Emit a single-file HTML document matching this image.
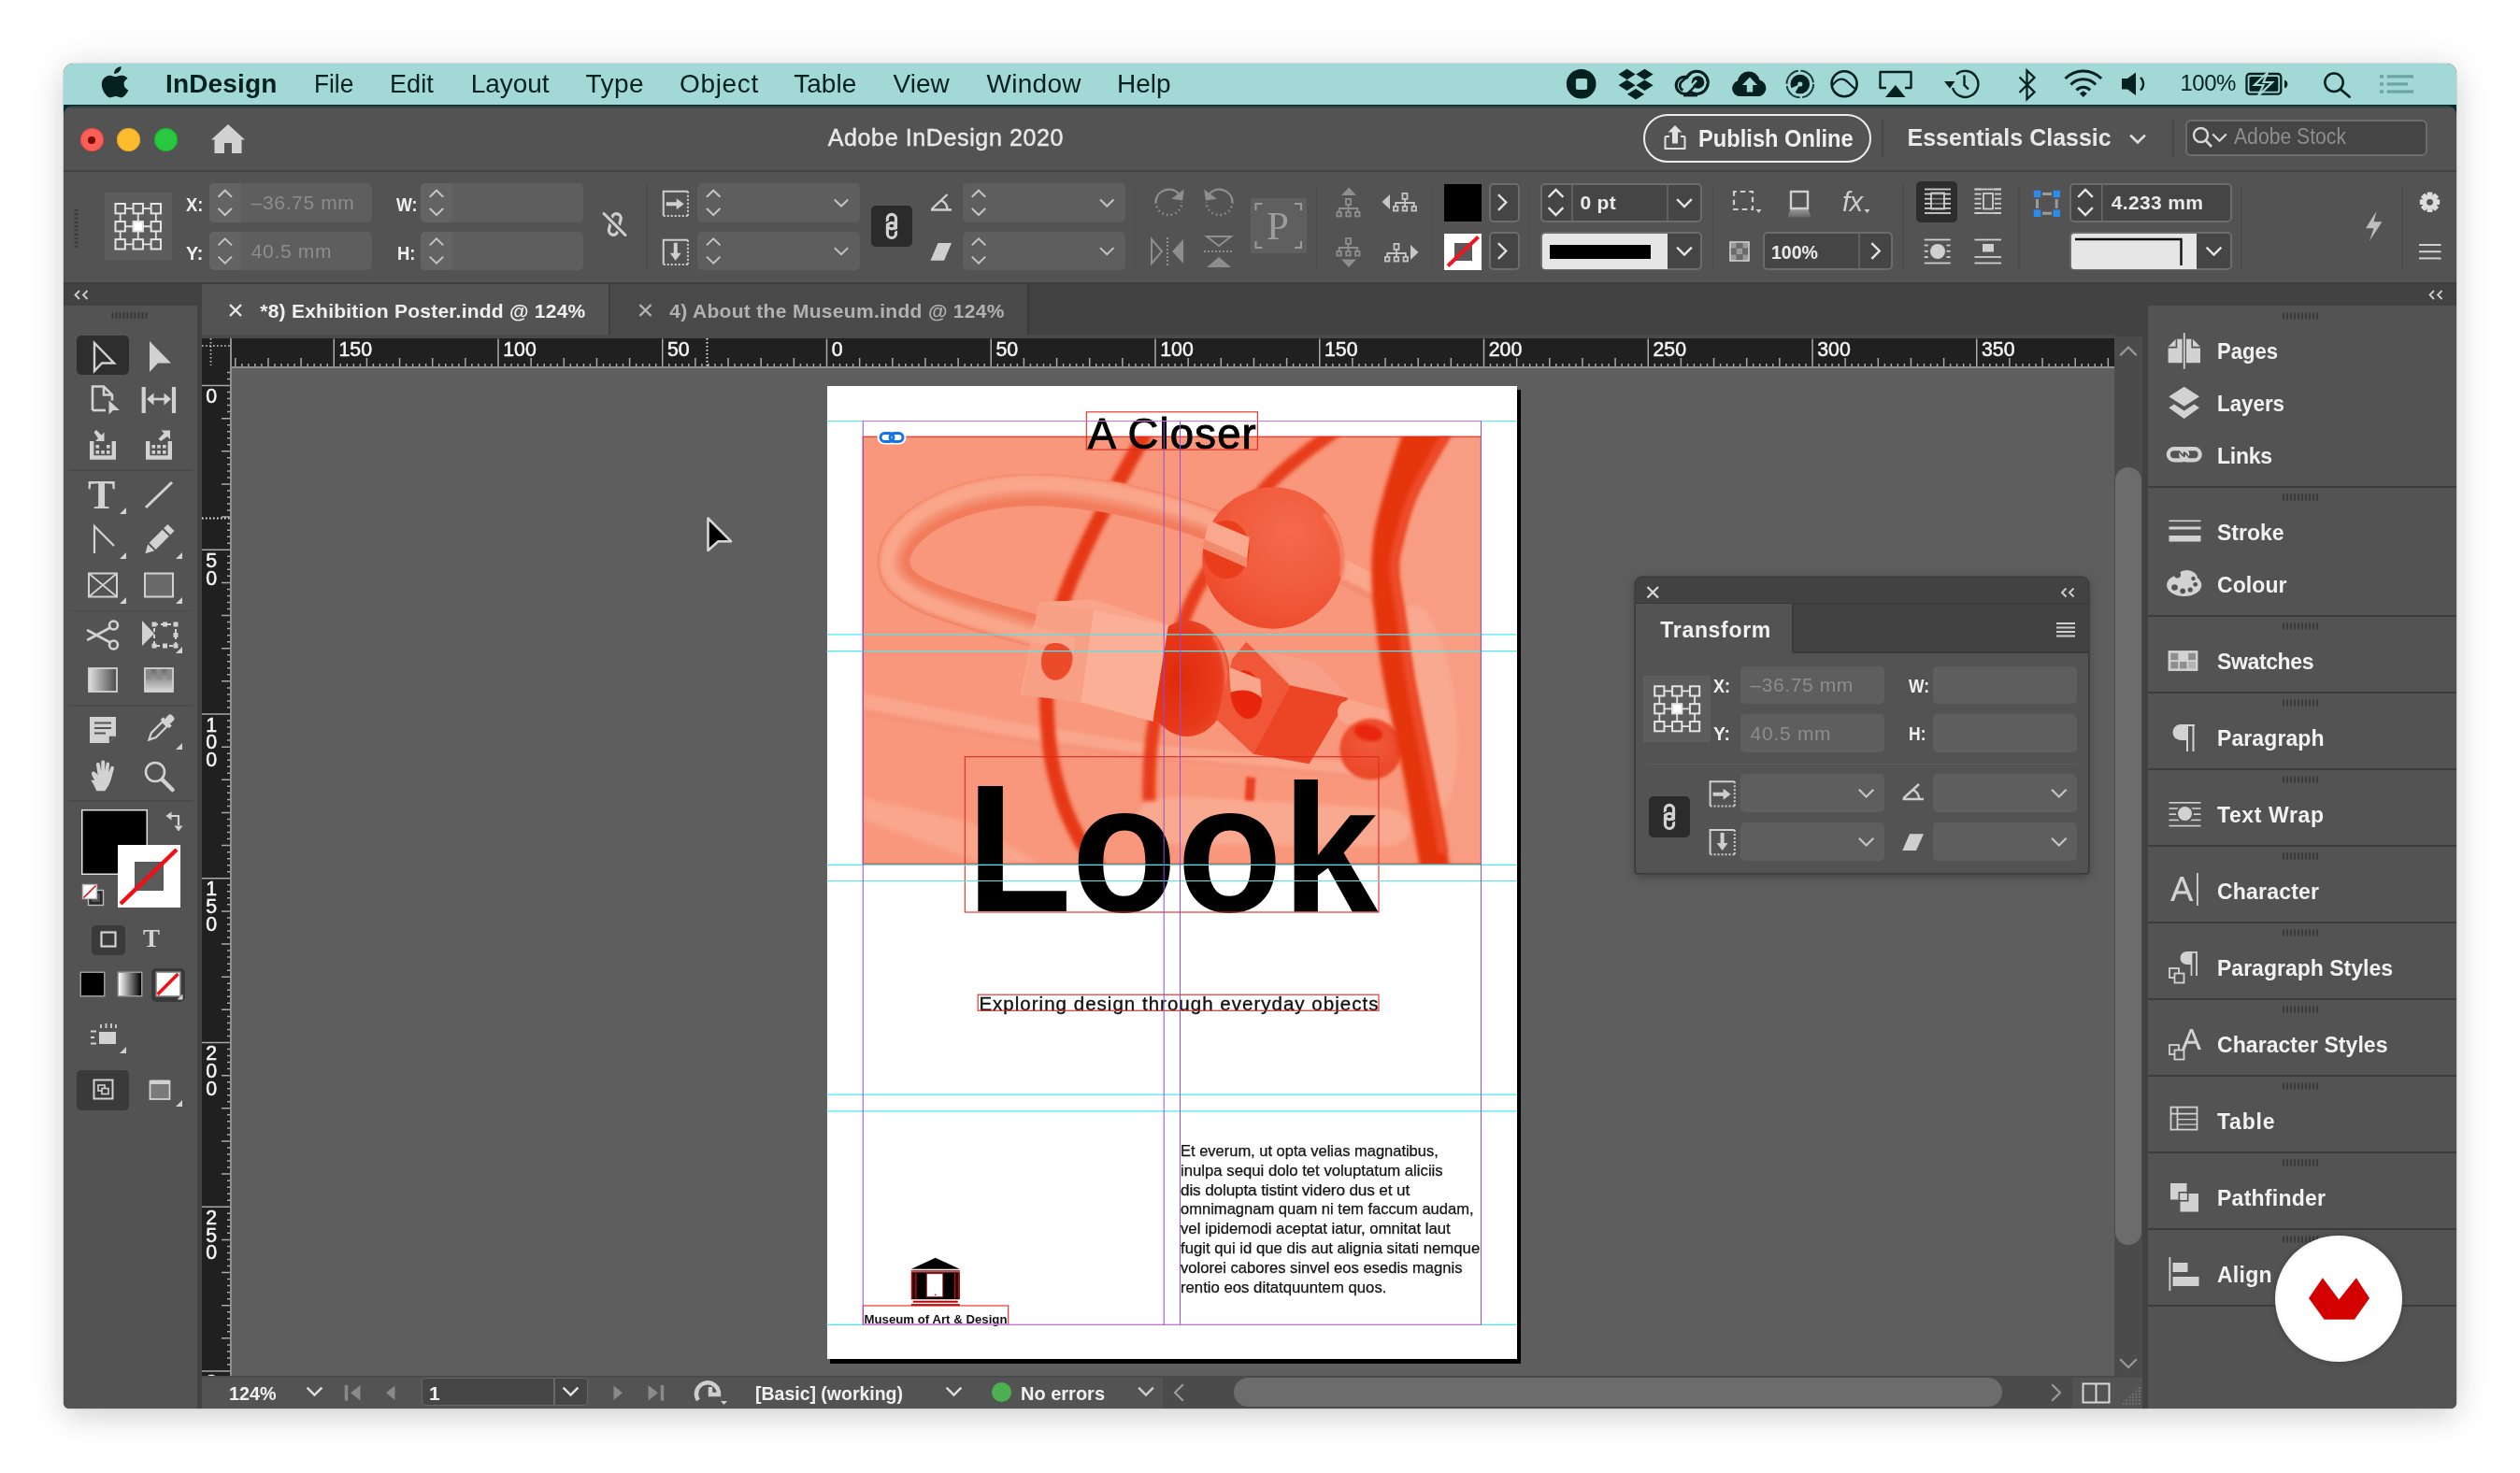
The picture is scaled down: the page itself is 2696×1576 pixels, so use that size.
<!DOCTYPE html>
<html lang="en"><head><meta charset="utf-8"><title>Adobe InDesign 2020</title>
<style>
html,body{margin:0;padding:0;}
body{width:2696px;height:1576px;background:#fff;overflow:hidden;position:relative;font-family:'Liberation Sans',sans-serif;}
#shadow{position:absolute;left:68px;top:68px;width:2560px;height:1439px;border-radius:10px 10px 6px 6px;box-shadow:0 12px 30px rgba(0,0,0,.10),0 0 44px rgba(0,0,0,.10),0 0 1.5px rgba(0,0,0,.4);}
#win{position:absolute;left:68px;top:68px;width:2560px;height:1439px;overflow:hidden;border-radius:10px 10px 6px 6px;background:#535353;}
#in{position:absolute;left:-68px;top:-68px;width:2696px;height:1576px;}
#in div,#in svg,#in span.t{position:absolute;}
span.t{white-space:pre;}
#win{will-change:transform;}
svg{overflow:visible;}

</style></head>
<body>
<div id="shadow"></div>
<div id="win"><div id="in">
<div style="left:68px;top:68px;width:2560px;height:44px;background:#a2d9d7;"></div>
<div style="left:68px;top:111.7px;width:2560px;height:13px;background:#03302f;"></div>
<div style="left:68px;top:113.4px;width:2560px;height:80px;border-radius:10px 10px 0 0;background:linear-gradient(#253838,#535353 3.5px);"></div>
<svg style="left:105.9px;top:69.7px;" width="34.6" height="36.8" viewBox="0 0 29.2 29"><g transform="scale(1.13,1)"><path fill="#04201f" d="M17.6 0c.2 1.7-.5 3.3-1.5 4.5-1 1.200-2.600 2.100-4.100 2-.2-1.600.6-3.300 1.500-4.300C14.500 1 16.200.1 17.600 0zM22.800 10.800c-.2.100-2.900 1.700-2.900 5 0 3.900 3.400 5.200 3.500 5.300 0 .1-.5 1.900-1.800 3.700-1.100 1.600-2.200 3.200-4 3.200s-2.300-1.100-4.300-1.100c-2 0-2.700 1.100-4.300 1.100-1.700.1-3-1.700-4.100-3.300C2.600 21.400.8 15.500 3.200 11.400c1.200-2 3.300-3.300 5.500-3.400 1.700 0 3.300 1.200 4.300 1.200 1 0 3-1.400 5.100-1.200.9 0 3.300.4 4.700 2.800z"/></g></svg>
<span class="t" style="left:177.00px;top:76.30px;font-size:28px;line-height:28px;color:#04201f;font-weight:700;letter-spacing:0.145px;">InDesign</span>
<span class="t" style="left:335.75px;top:76.30px;font-size:28px;line-height:28px;color:#04201f;transform:scaleX(0.9363);transform-origin:0 0;">File</span>
<span class="t" style="left:417.00px;top:76.30px;font-size:28px;line-height:28px;color:#04201f;transform:scaleX(0.9689);transform-origin:0 0;">Edit</span>
<span class="t" style="left:503.75px;top:76.30px;font-size:28px;line-height:28px;color:#04201f;letter-spacing:-0.066px;">Layout</span>
<span class="t" style="left:626.50px;top:76.30px;font-size:28px;line-height:28px;color:#04201f;letter-spacing:0.432px;">Type</span>
<span class="t" style="left:727.00px;top:76.30px;font-size:28px;line-height:28px;color:#04201f;letter-spacing:0.662px;">Object</span>
<span class="t" style="left:849.25px;top:76.30px;font-size:28px;line-height:28px;color:#04201f;letter-spacing:0.016px;">Table</span>
<span class="t" style="left:955.50px;top:76.30px;font-size:28px;line-height:28px;color:#04201f;letter-spacing:0.021px;">View</span>
<span class="t" style="left:1055.50px;top:76.30px;font-size:28px;line-height:28px;color:#04201f;letter-spacing:0.281px;">Window</span>
<span class="t" style="left:1195.00px;top:76.30px;font-size:28px;line-height:28px;color:#04201f;letter-spacing:-0.031px;">Help</span>
<div style="left:85.5px;top:137px;width:25px;height:25px;background:#fc5f57;border-radius:50%;box-shadow:inset 0 0 0 1px #e0443e;"></div>
<div style="left:125.25px;top:137px;width:25px;height:25px;background:#fdbc2e;border-radius:50%;box-shadow:inset 0 0 0 1px #dea123;"></div>
<div style="left:165.25px;top:137px;width:25px;height:25px;background:#28c840;border-radius:50%;box-shadow:inset 0 0 0 1px #1aab29;"></div>
<div style="left:94px;top:145.5px;width:8px;height:8px;background:#7a0a05;border-radius:50%;"></div>
<svg style="left:226px;top:133px;" width="36" height="31" viewBox="0 0 36 31"><path fill="#d2d2d2" d="M18 0 36 16.500 32.500 16.500 32.500 31 22 31 22 20 14 20 14 31 3.500 31 3.500 16.500 0 16.500z"/></svg>
<span class="t" style="left:885.75px;top:134.59px;font-size:25px;line-height:25px;color:#e8e8e8;letter-spacing:0.627px;-webkit-text-stroke:0.45px #e8e8e8;">Adobe InDesign 2020</span>
<div style="left:68px;top:182px;width:2560px;height:2px;background:#424242;"></div>
<div style="left:68px;top:184px;width:2560px;height:118px;background:#535353;"></div>
<div style="left:68px;top:302px;width:2560px;height:2px;background:#3e3e3e;"></div>
<svg style="left:0;top:0" width="2696" height="1576" viewBox="0 0 2696 1576"><rect x="79.5" y="224.0" width="4" height="2" fill="#3a3a3a"/><rect x="79.5" y="228.3" width="4" height="2" fill="#3a3a3a"/><rect x="79.5" y="232.6" width="4" height="2" fill="#3a3a3a"/><rect x="79.5" y="236.9" width="4" height="2" fill="#3a3a3a"/><rect x="79.5" y="241.2" width="4" height="2" fill="#3a3a3a"/><rect x="79.5" y="245.5" width="4" height="2" fill="#3a3a3a"/><rect x="79.5" y="249.8" width="4" height="2" fill="#3a3a3a"/><rect x="79.5" y="254.1" width="4" height="2" fill="#3a3a3a"/><rect x="79.5" y="258.4" width="4" height="2" fill="#3a3a3a"/><rect x="79.5" y="262.7" width="4" height="2" fill="#3a3a3a"/></svg>
<div style="left:112px;top:206px;width:72px;height:72px;background:#5d5d5d;"></div>
<svg style="left:0;top:0" width="2696" height="1576" viewBox="0 0 2696 1576"><line x1="128.68625" y1="223.18625" x2="166.81375" y2="223.18625" stroke="#e4e4e4" stroke-width="1.8"/><line x1="128.68625" y1="223.18625" x2="128.68625" y2="261.31375" stroke="#e4e4e4" stroke-width="1.8"/><line x1="128.68625" y1="261.31375" x2="166.81375" y2="261.31375" stroke="#e4e4e4" stroke-width="1.8"/><line x1="166.81375" y1="223.18625" x2="166.81375" y2="261.31375" stroke="#e4e4e4" stroke-width="1.8"/><line x1="128.68625" y1="242.25" x2="166.81375" y2="242.25" stroke="#e4e4e4" stroke-width="1.8"/><line x1="147.75" y1="223.18625" x2="147.75" y2="261.31375" stroke="#e4e4e4" stroke-width="1.8"/><rect x="123.50" y="218.00" width="10.37" height="10.37" fill="#5d5d5d" stroke="#e4e4e4" stroke-width="2"/><rect x="142.56" y="218.00" width="10.37" height="10.37" fill="#5d5d5d" stroke="#e4e4e4" stroke-width="2"/><rect x="161.63" y="218.00" width="10.37" height="10.37" fill="#5d5d5d" stroke="#e4e4e4" stroke-width="2"/><rect x="123.50" y="237.06" width="10.37" height="10.37" fill="#5d5d5d" stroke="#e4e4e4" stroke-width="2"/><rect x="142.56" y="237.06" width="10.37" height="10.37" fill="#fff" stroke="#e4e4e4" stroke-width="2"/><rect x="161.63" y="237.06" width="10.37" height="10.37" fill="#5d5d5d" stroke="#e4e4e4" stroke-width="2"/><rect x="123.50" y="256.13" width="10.37" height="10.37" fill="#5d5d5d" stroke="#e4e4e4" stroke-width="2"/><rect x="142.56" y="256.13" width="10.37" height="10.37" fill="#5d5d5d" stroke="#e4e4e4" stroke-width="2"/><rect x="161.63" y="256.13" width="10.37" height="10.37" fill="#5d5d5d" stroke="#e4e4e4" stroke-width="2"/></svg>
<span class="t" style="left:198.75px;top:207.97px;font-size:21px;line-height:21px;color:#f0f0f0;font-weight:700;transform:scaleX(0.8690);transform-origin:0 0;">X:</span>
<span class="t" style="left:198.75px;top:260.47px;font-size:21px;line-height:21px;color:#f0f0f0;font-weight:700;transform:scaleX(0.9382);transform-origin:0 0;">Y:</span>
<span class="t" style="left:423.75px;top:207.97px;font-size:21px;line-height:21px;color:#f0f0f0;font-weight:700;transform:scaleX(0.8511);transform-origin:0 0;">W:</span>
<span class="t" style="left:425.00px;top:260.47px;font-size:21px;line-height:21px;color:#f0f0f0;font-weight:700;transform:scaleX(0.8795);transform-origin:0 0;">H:</span>
<div style="left:223.75px;top:196.25px;width:173.75px;height:41.25px;background:#5e5e5e;border-radius:5px;"></div><div style="left:223.75px;top:196.25px;width:34px;height:41.25px;background:#636363;border-radius:5px 0 0 5px;"></div>
<svg style="left:0;top:0" width="2696" height="1576" viewBox="0 0 2696 1576"><polyline points="234.25,210.025 240.75,203.725 247.25,210.025" fill="none" stroke="#c4c4c4" stroke-width="2" stroke-linecap="square" stroke-linejoin="miter"/><polyline points="234.25,223.725 240.75,230.025 247.25,223.725" fill="none" stroke="#c4c4c4" stroke-width="2" stroke-linecap="square" stroke-linejoin="miter"/></svg>
<div style="left:450px;top:196.25px;width:173.75px;height:41.25px;background:#5e5e5e;border-radius:5px;"></div><div style="left:450px;top:196.25px;width:34px;height:41.25px;background:#636363;border-radius:5px 0 0 5px;"></div>
<svg style="left:0;top:0" width="2696" height="1576" viewBox="0 0 2696 1576"><polyline points="460.5,210.025 467,203.725 473.5,210.025" fill="none" stroke="#c4c4c4" stroke-width="2" stroke-linecap="square" stroke-linejoin="miter"/><polyline points="460.5,223.725 467,230.025 473.5,223.725" fill="none" stroke="#c4c4c4" stroke-width="2" stroke-linecap="square" stroke-linejoin="miter"/></svg>
<div style="left:746.25px;top:196.25px;width:173.25px;height:41.25px;background:#5e5e5e;border-radius:5px;"></div>
<svg style="left:0;top:0" width="2696" height="1576" viewBox="0 0 2696 1576"><polyline points="756.75,210.025 763.25,203.725 769.75,210.025" fill="none" stroke="#c4c4c4" stroke-width="2" stroke-linecap="square" stroke-linejoin="miter"/><polyline points="756.75,223.725 763.25,230.025 769.75,223.725" fill="none" stroke="#c4c4c4" stroke-width="2" stroke-linecap="square" stroke-linejoin="miter"/><polyline points="893.5,214.225 900.0,220.525 906.5,214.225" fill="none" stroke="#c4c4c4" stroke-width="2" stroke-linecap="square" stroke-linejoin="miter"/></svg>
<div style="left:1030px;top:196.25px;width:173.75px;height:41.25px;background:#5e5e5e;border-radius:5px;"></div>
<svg style="left:0;top:0" width="2696" height="1576" viewBox="0 0 2696 1576"><polyline points="1040.5,210.025 1047,203.725 1053.5,210.025" fill="none" stroke="#c4c4c4" stroke-width="2" stroke-linecap="square" stroke-linejoin="miter"/><polyline points="1040.5,223.725 1047,230.025 1053.5,223.725" fill="none" stroke="#c4c4c4" stroke-width="2" stroke-linecap="square" stroke-linejoin="miter"/><polyline points="1177.75,214.225 1184.25,220.525 1190.75,214.225" fill="none" stroke="#c4c4c4" stroke-width="2" stroke-linecap="square" stroke-linejoin="miter"/></svg>
<div style="left:223.75px;top:248px;width:173.75px;height:41px;background:#5e5e5e;border-radius:5px;"></div><div style="left:223.75px;top:248px;width:34px;height:41px;background:#636363;border-radius:5px 0 0 5px;"></div>
<svg style="left:0;top:0" width="2696" height="1576" viewBox="0 0 2696 1576"><polyline points="234.25,261.65 240.75,255.35 247.25,261.65" fill="none" stroke="#c4c4c4" stroke-width="2" stroke-linecap="square" stroke-linejoin="miter"/><polyline points="234.25,275.35 240.75,281.65 247.25,275.35" fill="none" stroke="#c4c4c4" stroke-width="2" stroke-linecap="square" stroke-linejoin="miter"/></svg>
<div style="left:450px;top:248px;width:173.75px;height:41px;background:#5e5e5e;border-radius:5px;"></div><div style="left:450px;top:248px;width:34px;height:41px;background:#636363;border-radius:5px 0 0 5px;"></div>
<svg style="left:0;top:0" width="2696" height="1576" viewBox="0 0 2696 1576"><polyline points="460.5,261.65 467,255.35 473.5,261.65" fill="none" stroke="#c4c4c4" stroke-width="2" stroke-linecap="square" stroke-linejoin="miter"/><polyline points="460.5,275.35 467,281.65 473.5,275.35" fill="none" stroke="#c4c4c4" stroke-width="2" stroke-linecap="square" stroke-linejoin="miter"/></svg>
<div style="left:746.25px;top:248px;width:173.25px;height:41px;background:#5e5e5e;border-radius:5px;"></div>
<svg style="left:0;top:0" width="2696" height="1576" viewBox="0 0 2696 1576"><polyline points="756.75,261.65 763.25,255.35 769.75,261.65" fill="none" stroke="#c4c4c4" stroke-width="2" stroke-linecap="square" stroke-linejoin="miter"/><polyline points="756.75,275.35 763.25,281.65 769.75,275.35" fill="none" stroke="#c4c4c4" stroke-width="2" stroke-linecap="square" stroke-linejoin="miter"/><polyline points="893.5,265.85 900.0,272.15 906.5,265.85" fill="none" stroke="#c4c4c4" stroke-width="2" stroke-linecap="square" stroke-linejoin="miter"/></svg>
<div style="left:1030px;top:248px;width:173.75px;height:41px;background:#5e5e5e;border-radius:5px;"></div>
<svg style="left:0;top:0" width="2696" height="1576" viewBox="0 0 2696 1576"><polyline points="1040.5,261.65 1047,255.35 1053.5,261.65" fill="none" stroke="#c4c4c4" stroke-width="2" stroke-linecap="square" stroke-linejoin="miter"/><polyline points="1040.5,275.35 1047,281.65 1053.5,275.35" fill="none" stroke="#c4c4c4" stroke-width="2" stroke-linecap="square" stroke-linejoin="miter"/><polyline points="1177.75,265.85 1184.25,272.15 1190.75,265.85" fill="none" stroke="#c4c4c4" stroke-width="2" stroke-linecap="square" stroke-linejoin="miter"/></svg>
<span class="t" style="left:268.75px;top:206.47px;font-size:21px;line-height:21px;color:#8d8d8d;letter-spacing:0.617px;">–36.75 mm</span>
<span class="t" style="left:268.75px;top:258.47px;font-size:21px;line-height:21px;color:#8d8d8d;letter-spacing:0.674px;">40.5 mm</span>
<div style="left:691.2px;top:197px;width:1.6px;height:92px;background:#4c4c4c;"></div>
<div style="left:1213.7px;top:197px;width:1.6px;height:92px;background:#4c4c4c;"></div>
<div style="left:1407.7px;top:197px;width:1.6px;height:92px;background:#4c4c4c;"></div>
<div style="left:1531.7px;top:197px;width:1.6px;height:92px;background:#4c4c4c;"></div>
<div style="left:1635.7px;top:197px;width:1.6px;height:92px;background:#4c4c4c;"></div>
<div style="left:1831.7px;top:197px;width:1.6px;height:92px;background:#4c4c4c;"></div>
<div style="left:2035.2px;top:197px;width:1.6px;height:92px;background:#4c4c4c;"></div>
<div style="left:2159.2px;top:197px;width:1.6px;height:92px;background:#4c4c4c;"></div>
<div style="left:2397.2px;top:197px;width:1.6px;height:92px;background:#4c4c4c;"></div>
<div style="left:2569.2px;top:197px;width:1.6px;height:92px;background:#4c4c4c;"></div>
<svg style="left:0;top:0" width="2696" height="1576" viewBox="0 0 2696 1576"><g transform="translate(657.800,240) rotate(14)" fill="none" stroke="#cfcfcf" stroke-width="3.200" stroke-linecap="round"><rect x="-4.800" y="-11.500" width="9.600" height="23" rx="4.800"/></g><path d="M645.500,228 L669.500,252" stroke="#535353" stroke-width="6.500"/><path d="M646,228.500 L669,251.500" stroke="#cfcfcf" stroke-width="3" stroke-linecap="round"/></svg>
<svg style="left:0;top:0" width="2696" height="1576" viewBox="0 0 2696 1576"><g transform="translate(708.75,203.75)"><path d="M1,27 V1 H27" fill="none" stroke="#cfcfcf" stroke-width="2"/><path d="M1,27.2 H28 M27.2,1 V28" fill="none" stroke="#cfcfcf" stroke-width="2" stroke-dasharray="2 2"/><path d="M4,12.5 h11 v-4 l8,6 -8,6 v-4 h-11z" fill="#cfcfcf"/></g><g transform="translate(708.75,255.75)"><path d="M1,27 V1 H27" fill="none" stroke="#cfcfcf" stroke-width="2"/><path d="M1,27.2 H28 M27.2,1 V28" fill="none" stroke="#cfcfcf" stroke-width="2" stroke-dasharray="2 2"/><path d="M12,4 v11 h-4 l6,8 6,-8 h-4 v-11z" fill="#cfcfcf"/></g></svg>
<div style="left:932px;top:220px;width:43.75px;height:43.75px;background:#2b2b2b;border-radius:5px;"></div>
<svg style="left:0;top:0" width="2696" height="1576" viewBox="0 0 2696 1576"><g transform="translate(953.95,241.9)"><g fill="none" stroke="#d2d2d2" stroke-width="3.2"><rect x="-4.550" y="-12.600" width="9.100" height="15.500" rx="4.550"/><rect x="-4.550" y="-3.600" width="9.100" height="16.200" rx="4.550"/></g><path d="M-7.200,-2.700 l5.200,-3" stroke="#2b2b2b" stroke-width="1.500"/><path d="M2,5.900 l5.200,-3" stroke="#2b2b2b" stroke-width="1.500"/></g></svg>
<svg style="left:0;top:0" width="2696" height="1576" viewBox="0 0 2696 1576"><path d="M996,224.5 H1018 M997,223.500 L1013.500,208 M1007,214.500 a11,11 0 0 1 6.500,9.500" fill="none" stroke="#cfcfcf" stroke-width="2.4"/></svg>
<svg style="left:0;top:0" width="2696" height="1576" viewBox="0 0 2696 1576"><path d="M995.5,278.75 L1003.5,260 H1018 L1010,278.75z" fill="#cfcfcf"/></svg>
<svg style="left:0;top:0" width="2696" height="1576" viewBox="0 0 2696 1576"><g fill="none" stroke="#8e8e8e" stroke-width="2.4"><path d="M1236.5,216 a14,14 0 0 1 25,-8"/><path d="M1236.500,216 a14,14 0 0 0 28,0" stroke-dasharray="1.6 3.2"/></g><path d="M1266,202 v12 h-12z" fill="#8e8e8e" transform="rotate(8 1262 208)"/></svg>
<svg style="left:0;top:0" width="2696" height="1576" viewBox="0 0 2696 1576"><g fill="none" stroke="#8e8e8e" stroke-width="2.4"><path d="M1318.5,216 a14,14 0 0 0 -25,-8"/><path d="M1318.500,216 a14,14 0 0 1 -28,0" stroke-dasharray="1.6 3.2"/></g><path d="M1289,202 v12 h12z" fill="#8e8e8e" transform="rotate(-8 1293 208)"/></svg>
<svg style="left:0;top:0" width="2696" height="1576" viewBox="0 0 2696 1576"><path d="M1232,256 v26 l11,-13z" fill="none" stroke="#8e8e8e" stroke-width="2"/><path d="M1266,256 v26 l-12,-13z" fill="#8e8e8e"/><line x1="1249" y1="254" x2="1249" y2="284" stroke="#8e8e8e" stroke-width="2" stroke-dasharray="2 2"/></svg>
<svg style="left:0;top:0" width="2696" height="1576" viewBox="0 0 2696 1576"><path d="M1291,253 h26 l-13,10z" fill="none" stroke="#8e8e8e" stroke-width="2"/><path d="M1291,286 h26 l-13,-11z" fill="#8e8e8e"/><line x1="1288" y1="269" x2="1320" y2="269" stroke="#8e8e8e" stroke-width="2" stroke-dasharray="2 2"/></svg>
<div style="left:1338px;top:211.75px;width:59.5px;height:59.5px;background:#5f5f5f;"></div>
<svg style="left:0;top:0" width="2696" height="1576" viewBox="0 0 2696 1576"><g fill="none" stroke="#9a9a9a" stroke-width="2"><path d="M1343.5,225 v-7 h7 M1385,218 h7 v7 M1392,258 v7 h-7 M1350.500,265 h-7 v-7"/></g></svg>
<span class="t" style="left:1355.00px;top:219.60px;font-size:43px;line-height:43px;color:#9c9c9c;font-family:'Liberation Serif',serif;">P</span>
<svg style="left:0;top:0" width="2696" height="1576" viewBox="0 0 2696 1576"><g transform="translate(1429.5,212)" fill="none" stroke="#8e8e8e" stroke-width="1.8"><rect x="10.5" y="0.9" width="5" height="6"/><rect x="0.900" y="15" width="4.500" height="4.500"/><rect x="10.700" y="15" width="4.500" height="4.500"/><rect x="20.500" y="15" width="4.500" height="4.500"/><path d="M13,7 v8 M3.200,15 v-4 h19.600 v4"/></g><path d="M1435,209 h16 l-8,-8.500z" fill="#8e8e8e"/></svg>
<svg style="left:0;top:0" width="2696" height="1576" viewBox="0 0 2696 1576"><g transform="translate(1490,206)" fill="none" stroke="#c6c6c6" stroke-width="1.8"><rect x="10.5" y="0.9" width="5" height="6"/><rect x="0.900" y="15" width="4.500" height="4.500"/><rect x="10.700" y="15" width="4.500" height="4.500"/><rect x="20.500" y="15" width="4.500" height="4.500"/><path d="M13,7 v8 M3.200,15 v-4 h19.600 v4"/></g><path d="M1487,208 v16 l-8.500,-8z" fill="#c6c6c6"/></svg>
<svg style="left:0;top:0" width="2696" height="1576" viewBox="0 0 2696 1576"><g transform="translate(1429.5,254)" fill="none" stroke="#8e8e8e" stroke-width="1.8"><rect x="10.5" y="0.9" width="5" height="6"/><rect x="0.900" y="15" width="4.500" height="4.500"/><rect x="10.700" y="15" width="4.500" height="4.500"/><rect x="20.500" y="15" width="4.500" height="4.500"/><path d="M13,7 v8 M3.200,15 v-4 h19.600 v4"/></g><path d="M1435,277.5 h16 l-8,8.500z" fill="#8e8e8e"/></svg>
<svg style="left:0;top:0" width="2696" height="1576" viewBox="0 0 2696 1576"><g transform="translate(1481,260)" fill="none" stroke="#c6c6c6" stroke-width="1.8"><rect x="10.5" y="0.9" width="5" height="6"/><rect x="0.900" y="15" width="4.500" height="4.500"/><rect x="10.700" y="15" width="4.500" height="4.500"/><rect x="20.500" y="15" width="4.500" height="4.500"/><path d="M13,7 v8 M3.200,15 v-4 h19.600 v4"/></g><path d="M1509,262 v16 l8.500,-8z" fill="#c6c6c6"/></svg>
<div style="left:1545px;top:196.75px;width:40px;height:40.5px;background:#000;"></div>
<div style="left:1545px;top:250px;width:40px;height:38.75px;background:#fff;"></div>
<div style="left:1555.5px;top:260px;width:19px;height:19px;background:#5a5a5a;"></div>
<svg style="left:0;top:0" width="2696" height="1576" viewBox="0 0 2696 1576"><line x1="1549" y1="284.500" x2="1581.500" y2="253.500" stroke="#f0141e" stroke-width="4"/></svg>
<div style="left:1592.5px;top:196.25px;width:29px;height:37.25px;background:#454545;border:2px solid #6c6c6c;border-radius:5px;"></div>
<div style="left:1592.5px;top:248px;width:29px;height:37px;background:#454545;border:2px solid #6c6c6c;border-radius:5px;"></div>
<svg style="left:0;top:0" width="2696" height="1576" viewBox="0 0 2696 1576"><polyline points="1603.75,209.0 1611.25,216.5 1603.75,224.0" fill="none" stroke="#e0e0e0" stroke-width="2.4" stroke-linecap="square" stroke-linejoin="miter"/><polyline points="1603.75,261.0 1611.25,268.5 1603.75,276.0" fill="none" stroke="#e0e0e0" stroke-width="2.4" stroke-linecap="square" stroke-linejoin="miter"/></svg>
<div style="left:1648px;top:196.25px;width:169px;height:37.25px;background:#454545;border:2px solid #6c6c6c;border-radius:5px;"></div>
<svg style="left:0;top:0" width="2696" height="1576" viewBox="0 0 2696 1576"><path d="M1682,197 v39.500 M1784,197 v39.500" stroke="#686868" stroke-width="1.5"/><polyline points="1657.5,210.0 1664.5,203.0 1671.5,210.0" fill="none" stroke="#e6e6e6" stroke-width="2.4" stroke-linecap="square" stroke-linejoin="miter"/><polyline points="1657.5,223.0 1664.5,230.0 1671.5,223.0" fill="none" stroke="#e6e6e6" stroke-width="2.4" stroke-linecap="square" stroke-linejoin="miter"/><polyline points="1795.0,214.0 1802,221.0 1809.0,214.0" fill="none" stroke="#e6e6e6" stroke-width="2.4" stroke-linecap="square" stroke-linejoin="miter"/></svg>
<span class="t" style="left:1690.50px;top:206.47px;font-size:21px;line-height:21px;color:#eaeaea;font-weight:700;letter-spacing:0.302px;">0 pt</span>
<div style="left:1648px;top:248px;width:169px;height:37px;background:#454545;border:2px solid #6c6c6c;border-radius:5px;"></div>
<div style="left:1650px;top:250px;width:134px;height:37.5px;background:#e6e6e6;border-radius:3px 0 0 3px;"></div>
<div style="left:1657.5px;top:262px;width:108.5px;height:15px;background:#000;"></div>
<svg style="left:0;top:0" width="2696" height="1576" viewBox="0 0 2696 1576"><polyline points="1795.0,265.5 1802,272.5 1809.0,265.5" fill="none" stroke="#e6e6e6" stroke-width="2.4" stroke-linecap="square" stroke-linejoin="miter"/></svg>
<svg style="left:0;top:0" width="2696" height="1576" viewBox="0 0 2696 1576"><rect x="1855" y="205" width="20" height="19" fill="none" stroke="#cfcfcf" stroke-width="2.2" stroke-dasharray="5.5 4" stroke-dashoffset="2.700"/><path d="M1878.500,224 h6 l-3,4z" fill="#cfcfcf"/></svg>
<svg style="left:0;top:0" width="2696" height="1576" viewBox="0 0 2696 1576"><defs><linearGradient id="dsg" x1="0" y1="0" x2="0" y2="1"><stop offset="0" stop-color="#999"/><stop offset="1" stop-color="#666"/></linearGradient></defs><path d="M1912.5,232.5 l3,-9 h19 l3,9z" fill="url(#dsg)"/><rect x="1916" y="205" width="18" height="18" fill="#535353" stroke="#cfcfcf" stroke-width="2.400"/></svg>
<span class="t" style="left:1971.00px;top:201.95px;font-size:29px;line-height:29px;color:#cfcfcf;font-style:italic;letter-spacing:-0.562px;">fx</span>
<svg style="left:0;top:0" width="2696" height="1576" viewBox="0 0 2696 1576"><path d="M1994.500,224 h6 l-3,4z" fill="#cfcfcf"/></svg>
<svg style="left:0;top:0" width="2696" height="1576" viewBox="0 0 2696 1576"><rect x="1851.0" y="259.0" width="6.7" height="6.7" fill="#9a9a9a"/><rect x="1857.7" y="259.0" width="6.7" height="6.7" fill="#6a6a6a"/><rect x="1864.4" y="259.0" width="6.7" height="6.7" fill="#9a9a9a"/><rect x="1851.0" y="265.7" width="6.7" height="6.7" fill="#6a6a6a"/><rect x="1857.7" y="265.7" width="6.7" height="6.7" fill="#9a9a9a"/><rect x="1864.4" y="265.7" width="6.7" height="6.7" fill="#6a6a6a"/><rect x="1851.0" y="272.4" width="6.7" height="6.7" fill="#9a9a9a"/><rect x="1857.7" y="272.4" width="6.7" height="6.7" fill="#6a6a6a"/><rect x="1864.4" y="272.4" width="6.7" height="6.7" fill="#9a9a9a"/><rect x="1851" y="259" width="20" height="20" fill="none" stroke="#cfcfcf" stroke-width="1.6"/></svg>
<div style="left:1886px;top:248px;width:135px;height:37px;background:#454545;border:2px solid #6c6c6c;border-radius:5px;"></div>
<svg style="left:0;top:0" width="2696" height="1576" viewBox="0 0 2696 1576"><path d="M1989,249 v39.500" stroke="#686868" stroke-width="1.5"/><polyline points="2003.25,261.0 2010.75,268.5 2003.25,276.0" fill="none" stroke="#e6e6e6" stroke-width="2.4" stroke-linecap="square" stroke-linejoin="miter"/></svg>
<span class="t" style="left:1895.00px;top:258.72px;font-size:21px;line-height:21px;color:#eaeaea;font-weight:700;transform:scaleX(0.9308);transform-origin:0 0;">100%</span>
<div style="left:2050px;top:194px;width:43.75px;height:43.5px;background:#2d2d2d;border-radius:5px;"></div>
<svg style="left:0;top:0" width="2696" height="1576" viewBox="0 0 2696 1576"><line x1="2059" y1="202.50" x2="2087" y2="202.50" stroke="#cfcfcf" stroke-width="1.8"/><line x1="2059" y1="207.60" x2="2087" y2="207.60" stroke="#cfcfcf" stroke-width="1.8"/><line x1="2059" y1="212.70" x2="2087" y2="212.70" stroke="#cfcfcf" stroke-width="1.8"/><line x1="2059" y1="217.80" x2="2087" y2="217.80" stroke="#cfcfcf" stroke-width="1.8"/><line x1="2059" y1="222.90" x2="2087" y2="222.90" stroke="#cfcfcf" stroke-width="1.8"/><line x1="2059" y1="228.00" x2="2087" y2="228.00" stroke="#cfcfcf" stroke-width="1.8"/><rect x="2066" y="206.500" width="14" height="17" fill="none" stroke="#cfcfcf" stroke-width="1.800"/><rect x="2067" y="207.500" width="12" height="15" fill="#2d2d2d" opacity="0.5"/></svg>
<svg style="left:0;top:0" width="2696" height="1576" viewBox="0 0 2696 1576"><line x1="2112.5" y1="202.50" x2="2119.5" y2="202.50" stroke="#cfcfcf" stroke-width="1.8"/><line x1="2112.5" y1="207.60" x2="2119.5" y2="207.60" stroke="#cfcfcf" stroke-width="1.8"/><line x1="2112.5" y1="212.70" x2="2119.5" y2="212.70" stroke="#cfcfcf" stroke-width="1.8"/><line x1="2112.5" y1="217.80" x2="2119.5" y2="217.80" stroke="#cfcfcf" stroke-width="1.8"/><line x1="2112.5" y1="222.90" x2="2119.5" y2="222.90" stroke="#cfcfcf" stroke-width="1.8"/><line x1="2112.5" y1="228.00" x2="2119.5" y2="228.00" stroke="#cfcfcf" stroke-width="1.8"/><line x1="2134" y1="202.50" x2="2141" y2="202.50" stroke="#cfcfcf" stroke-width="1.8"/><line x1="2134" y1="207.60" x2="2141" y2="207.60" stroke="#cfcfcf" stroke-width="1.8"/><line x1="2134" y1="212.70" x2="2141" y2="212.70" stroke="#cfcfcf" stroke-width="1.8"/><line x1="2134" y1="217.80" x2="2141" y2="217.80" stroke="#cfcfcf" stroke-width="1.8"/><line x1="2134" y1="222.90" x2="2141" y2="222.90" stroke="#cfcfcf" stroke-width="1.8"/><line x1="2134" y1="228.00" x2="2141" y2="228.00" stroke="#cfcfcf" stroke-width="1.8"/><line x1="2112.5" y1="202.50" x2="2141.0" y2="202.50" stroke="#cfcfcf" stroke-width="1.8"/><line x1="2112.5" y1="228.00" x2="2141.0" y2="228.00" stroke="#cfcfcf" stroke-width="1.8"/><rect x="2122" y="207" width="10" height="16.500" fill="none" stroke="#cfcfcf" stroke-width="1.800"/></svg>
<svg style="left:0;top:0" width="2696" height="1576" viewBox="0 0 2696 1576"><line x1="2058.75" y1="256.50" x2="2086.75" y2="256.50" stroke="#cfcfcf" stroke-width="1.8"/><line x1="2058.75" y1="281.50" x2="2086.75" y2="281.50" stroke="#cfcfcf" stroke-width="1.8"/><line x1="2058.75" y1="262.50" x2="2062.75" y2="262.50" stroke="#cfcfcf" stroke-width="1.8"/><line x1="2058.75" y1="268.80" x2="2062.75" y2="268.80" stroke="#cfcfcf" stroke-width="1.8"/><line x1="2058.75" y1="275.10" x2="2062.75" y2="275.10" stroke="#cfcfcf" stroke-width="1.8"/><line x1="2082.5" y1="262.50" x2="2086.5" y2="262.50" stroke="#cfcfcf" stroke-width="1.8"/><line x1="2082.5" y1="268.80" x2="2086.5" y2="268.80" stroke="#cfcfcf" stroke-width="1.8"/><line x1="2082.5" y1="275.10" x2="2086.5" y2="275.10" stroke="#cfcfcf" stroke-width="1.8"/><circle cx="2073" cy="269" r="8" fill="#cfcfcf"/></svg>
<svg style="left:0;top:0" width="2696" height="1576" viewBox="0 0 2696 1576"><line x1="2112.5" y1="256.50" x2="2141.0" y2="256.50" stroke="#cfcfcf" stroke-width="1.8"/><line x1="2112.5" y1="275.00" x2="2141.0" y2="275.00" stroke="#cfcfcf" stroke-width="1.8"/><line x1="2112.5" y1="281.50" x2="2141.0" y2="281.50" stroke="#cfcfcf" stroke-width="1.8"/><rect x="2121" y="261" width="12" height="8.500" fill="#cfcfcf"/></svg>
<svg style="left:0;top:0" width="2696" height="1576" viewBox="0 0 2696 1576"><rect x="2175.75" y="203.75" width="7.5" height="7.5" fill="#2d8ceb"/><rect x="2175.75" y="224.5" width="7.5" height="7.5" fill="#2d8ceb"/><rect x="2196.5" y="203.75" width="7.5" height="7.5" fill="#2d8ceb"/><rect x="2196.5" y="224.5" width="7.5" height="7.5" fill="#2d8ceb"/><path d="M2185,207.500 h10 M2185,228.200 h10 M2179.500,213 v10 M2200.200,213 v10" stroke="#9a9a9a" stroke-width="3"/></svg>
<div style="left:2214px;top:196.25px;width:169.5px;height:37.25px;background:#454545;border:2px solid #6c6c6c;border-radius:5px;"></div>
<svg style="left:0;top:0" width="2696" height="1576" viewBox="0 0 2696 1576"><path d="M2248.750,197 v39.500" stroke="#686868" stroke-width="1.5"/><polyline points="2224.0,210.0 2231,203.0 2238.0,210.0" fill="none" stroke="#e6e6e6" stroke-width="2.4" stroke-linecap="square" stroke-linejoin="miter"/><polyline points="2224.0,223.0 2231,230.0 2238.0,223.0" fill="none" stroke="#e6e6e6" stroke-width="2.4" stroke-linecap="square" stroke-linejoin="miter"/></svg>
<span class="t" style="left:2258.75px;top:206.47px;font-size:21px;line-height:21px;color:#eaeaea;font-weight:700;letter-spacing:0.359px;">4.233 mm</span>
<div style="left:2214px;top:248px;width:169.5px;height:37px;background:#454545;border:2px solid #6c6c6c;border-radius:5px;"></div>
<div style="left:2215.75px;top:250px;width:134.25px;height:37.5px;background:#e6e6e6;border-radius:3px 0 0 3px;"></div>
<svg style="left:0;top:0" width="2696" height="1576" viewBox="0 0 2696 1576"><path d="M2220,256 h113.500 v28" fill="none" stroke="#111" stroke-width="2.4"/><polyline points="2361.5,265.5 2368.5,272.5 2375.5,265.5" fill="none" stroke="#e6e6e6" stroke-width="2.4" stroke-linecap="square" stroke-linejoin="miter"/></svg>
<svg style="left:0;top:0" width="2696" height="1576" viewBox="0 0 2696 1576"><path d="M2542.500,225.750 l-11.500,18.500 h8.500 l-4.500,13.500 13.500,-20.500 h-9z" fill="#bdbdbd"/></svg>
<svg style="left:0;top:0" width="2696" height="1576" viewBox="0 0 2696 1576"><g transform="translate(2599.5,216.3)" fill="#dcdcdc"><rect x="-2.800" y="-10.6" width="5.600" height="21.2" rx="1" transform="rotate(0)"/><rect x="-2.800" y="-10.6" width="5.600" height="21.2" rx="1" transform="rotate(45)"/><rect x="-2.800" y="-10.6" width="5.600" height="21.2" rx="1" transform="rotate(90)"/><rect x="-2.800" y="-10.6" width="5.600" height="21.2" rx="1" transform="rotate(135)"/><rect x="-2.800" y="-10.6" width="5.600" height="21.2" rx="1" transform="rotate(180)"/><rect x="-2.800" y="-10.6" width="5.600" height="21.2" rx="1" transform="rotate(225)"/><rect x="-2.800" y="-10.6" width="5.600" height="21.2" rx="1" transform="rotate(270)"/><rect x="-2.800" y="-10.6" width="5.600" height="21.2" rx="1" transform="rotate(315)"/><circle r="7.63"/><circle r="3.39" fill="#535353"/></g></svg>
<svg style="left:0;top:0" width="2696" height="1576" viewBox="0 0 2696 1576"><line x1="2588" y1="262.00" x2="2611.5" y2="262.00" stroke="#d0d0d0" stroke-width="2"/><line x1="2588" y1="269.20" x2="2611.5" y2="269.20" stroke="#d0d0d0" stroke-width="2"/><line x1="2588" y1="276.40" x2="2611.5" y2="276.40" stroke="#d0d0d0" stroke-width="2"/></svg>
<div style="left:1758px;top:121.75px;width:239.75px;height:48px;border:2px solid #ececec;border-radius:26px;"></div>
<svg style="left:0;top:0" width="2696" height="1576" viewBox="0 0 2696 1576"><path d="M1781.500,146 v13 h21 v-13 M1786,146 h-4.500 M1798,146 h4.500" fill="none" stroke="#e0e0e0" stroke-width="2"/><path d="M1792,134 l7.500,7.500 h-4.500 v12 h-6 v-12 h-4.500z" fill="#e0e0e0"/></svg>
<span class="t" style="left:1816.75px;top:136.34px;font-size:25px;line-height:25px;color:#f0f0f0;font-weight:700;transform:scaleX(0.9471);transform-origin:0 0;">Publish Online</span>
<div style="left:2013px;top:127.5px;width:2px;height:40px;background:#474747;"></div>
<span class="t" style="left:2040.50px;top:134.59px;font-size:25px;line-height:25px;color:#e8e8e8;font-weight:700;">Essentials Classic</span>
<svg style="left:0;top:0" width="2696" height="1576" viewBox="0 0 2696 1576"><polyline points="2280.0,145.5 2287,152.5 2294.0,145.5" fill="none" stroke="#e0e0e0" stroke-width="2.6" stroke-linecap="square" stroke-linejoin="miter"/></svg>
<div style="left:2324px;top:127.5px;width:2px;height:40px;background:#474747;"></div>
<div style="left:2338.25px;top:128.3px;width:255px;height:35px;background:#454545;border:2px solid #6c6c6c;border-radius:6px;"></div>
<svg style="left:0;top:0" width="2696" height="1576" viewBox="0 0 2696 1576"><circle cx="2354.500" cy="144.500" r="7.500" fill="none" stroke="#d8d8d8" stroke-width="2.400"/><line x1="2360" y1="150.500" x2="2366" y2="157" stroke="#d8d8d8" stroke-width="2.600"/><polyline points="2368.0,144.25 2374.5,150.75 2381.0,144.25" fill="none" stroke="#d8d8d8" stroke-width="2.2" stroke-linecap="square" stroke-linejoin="miter"/></svg>
<span class="t" style="left:2390.00px;top:135.11px;font-size:23.5px;line-height:23.5px;color:#8e8e8e;transform:scaleX(0.9005);transform-origin:0 0;">Adobe Stock</span>
<svg style="left:0;top:0" width="2696" height="1576" viewBox="0 0 2696 1576"><circle cx="1691.700" cy="89.750" r="15.800" fill="#04201f"/><rect x="1685.900" y="84" width="12.200" height="12" rx="2" fill="#a2d9d7"/></svg>
<svg style="left:0;top:0" width="2696" height="1576" viewBox="0 0 2696 1576"><g fill="#04201f"><path d="M1731.5,79.5 L1740.6,73.7 L1749.6999999999998,79.5 L1740.6,85.3Z"/><path d="M1750.4,79.5 L1759.5,73.7 L1768.6,79.5 L1759.5,85.3Z"/><path d="M1731.5,91.3 L1740.6,85.5 L1749.6999999999998,91.3 L1740.6,97.1Z"/><path d="M1750.4,91.3 L1759.5,85.5 L1768.6,91.3 L1759.5,97.1Z"/><path d="M1740.9,100.7 L1750,94.9 L1759.1,100.7 L1750,106.5Z"/></g></svg>
<svg style="left:0;top:0" width="2696" height="1576" viewBox="0 0 2696 1576"><g fill="none" stroke="#04201f" stroke-width="3.2"><circle cx="1802.300" cy="91.300" r="9"/><circle cx="1815.200" cy="88.300" r="12"/></g><circle cx="1802.300" cy="91.300" r="7.400" fill="#a2d9d7"/><circle cx="1815.200" cy="88.300" r="10.400" fill="#a2d9d7"/><path d="M1801,101.800 h15" stroke="#04201f" stroke-width="3.200"/><circle cx="1816.500" cy="88" r="6.800" fill="#04201f"/><path d="M1800.500,96.500 a5.500,5.500 0 0 1 -1,-9.500 l9,-8" fill="none" stroke="#04201f" stroke-width="2.600"/><path d="M1804,98 l11,-12" stroke="#a2d9d7" stroke-width="2.400"/><path d="M1806.500,99.500 l10,-11" stroke="#04201f" stroke-width="2.400"/></svg>
<svg style="left:0;top:0" width="2696" height="1576" viewBox="0 0 2696 1576"><path d="M1860.500,103 a8.500,8.500 0 0 1 -1.500,-16.500 a12,12 0 0 1 23.500,-1 a9,9 0 0 1 0,17.500z" fill="#04201f"/><path d="M1872,82.500 l8,8.500 h-4.800 v7.500 h-6.400 v-7.500 h-4.800z" fill="#a2d9d7"/></svg>
<svg style="left:0;top:0" width="2696" height="1576" viewBox="0 0 2696 1576"><circle cx="1925.800" cy="90" r="14.300" fill="none" stroke="#04201f" stroke-width="2" stroke-dasharray="20 2.500" opacity=".85"/><circle cx="1925.800" cy="90" r="10.300" fill="#04201f"/><circle cx="1925.800" cy="90" r="2.600" fill="#a2d9d7"/><path d="M1925.800,90 l-11,5 4,7z" fill="#a2d9d7"/></svg>
<svg style="left:0;top:0" width="2696" height="1576" viewBox="0 0 2696 1576"><circle cx="1973.100" cy="89.700" r="13.500" fill="none" stroke="#04201f" stroke-width="2.600"/><path d="M1960,92 c6,-9 12,-9 17,-4 4,4 7,7 9.500,8" fill="none" stroke="#04201f" stroke-width="2.200"/></svg>
<svg style="left:0;top:0" width="2696" height="1576" viewBox="0 0 2696 1576"><path d="M2018,94 h-6.500 v-17 h33 v17 h-6.500" fill="none" stroke="#04201f" stroke-width="2.400" stroke-linejoin="round"/><path d="M2017,104 l10.800,-13 10.800,13z" fill="#04201f"/></svg>
<svg style="left:0;top:0" width="2696" height="1576" viewBox="0 0 2696 1576"><path d="M2089,94 a14,14 0 1 0 4,-14.500" fill="none" stroke="#04201f" stroke-width="2.400"/><path d="M2080,87 h11.500 l-5.500,7.500z" fill="#04201f"/><path d="M2101.500,80.500 v10.500 l4.500,4.500" fill="none" stroke="#04201f" stroke-width="2.400"/></svg>
<svg style="left:0;top:0" width="2696" height="1576" viewBox="0 0 2696 1576"><path d="M2160.500,82.500 l16,16 -8,7.500 v-30.500 l8,7.500 -16,16" fill="none" stroke="#04201f" stroke-width="2.300" stroke-linejoin="miter"/></svg>
<svg style="left:0;top:0" width="2696" height="1576" viewBox="0 0 2696 1576"><g fill="none" stroke="#04201f" stroke-width="3"><path d="M2209.500,84 a27,27 0 0 1 38.600,0"/><path d="M2215.500,90.500 a18.500,18.500 0 0 1 26.600,0"/><path d="M2221.500,96.500 a10,10 0 0 1 14.600,0"/></g><path d="M2224.800,100 l4,-2.800 4,2.800 -4,4z" fill="#04201f"/></svg>
<svg style="left:0;top:0" width="2696" height="1576" viewBox="0 0 2696 1576"><path d="M2270,84 h6 l9,-6.500 v24.500 l-9,-6.500 h-6z" fill="#04201f"/><path d="M2290,83 a9,9 0 0 1 0,13.500" fill="none" stroke="#04201f" stroke-width="2.300"/></svg>
<span class="t" style="left:2332.40px;top:76.98px;font-size:24px;line-height:24px;color:#04201f;letter-spacing:-0.464px;">100%</span>
<svg style="left:0;top:0" width="2696" height="1576" viewBox="0 0 2696 1576"><rect x="2403.500" y="79" width="36.800" height="21.700" rx="3.500" fill="none" stroke="#04201f" stroke-width="2.300"/><rect x="2406.500" y="82" width="30.800" height="15.700" rx="1.500" fill="#04201f"/><path d="M2444,85.800 a4.300,4.300 0 0 1 0,8.400z" fill="#04201f"/><path d="M2426,77.500 l-14,13.500 h9.500 l-5.500,11.500 15,-14.500 h-9.500z" fill="#04201f" stroke="#a2d9d7" stroke-width="2.200"/></svg>
<svg style="left:0;top:0" width="2696" height="1576" viewBox="0 0 2696 1576"><circle cx="2497" cy="88.300" r="9.700" fill="none" stroke="#04201f" stroke-width="2.500"/><path d="M2504,95.500 l9.500,8" stroke="#04201f" stroke-width="2.800" stroke-linecap="round"/></svg>
<svg style="left:0;top:0" width="2696" height="1576" viewBox="0 0 2696 1576"><rect x="2545.900" y="80.2" width="4.100" height="3.300" fill="#6ba5a2"/><rect x="2553.700" y="80.2" width="28.3" height="3.300" fill="#6ba5a2"/><rect x="2545.900" y="88.3" width="4.100" height="3.300" fill="#6ba5a2"/><rect x="2553.700" y="88.3" width="22.3" height="3.300" fill="#6ba5a2"/><rect x="2545.900" y="96.4" width="4.100" height="3.300" fill="#6ba5a2"/><rect x="2553.700" y="96.4" width="28.3" height="3.300" fill="#6ba5a2"/></svg>
<div style="left:68px;top:304px;width:2560px;height:56px;background:#424242;"></div>
<div style="left:215.5px;top:304px;width:436.5px;height:56px;background:#535353;"></div>
<div style="left:652px;top:304px;width:448.5px;height:56px;background:#4a4a4a;"></div>
<div style="left:1099px;top:304px;width:2px;height:56px;background:#3a3a3a;"></div>
<div style="left:651px;top:304px;width:1.5px;height:56px;background:#3e3e3e;"></div>
<svg style="left:0;top:0" width="2696" height="1576" viewBox="0 0 2696 1576"><path d="M246,326 l12,12 M258,326 l-12,12" stroke="#e8e8e8" stroke-width="2.4"/><path d="M684.500,326 l12,12 M696.500,326 l-12,12" stroke="#b4b4b4" stroke-width="2.400"/></svg>
<span class="t" style="left:278.25px;top:321.72px;font-size:21px;line-height:21px;color:#f0f0f0;font-weight:700;letter-spacing:0.243px;">*8) Exhibition Poster.indd @ 124%</span>
<span class="t" style="left:716.25px;top:321.72px;font-size:21px;line-height:21px;color:#b2b2b2;font-weight:700;letter-spacing:0.317px;">4) About the Museum.indd @ 124%</span>
<div style="left:215.5px;top:360px;width:2047px;height:1113px;background:#5e5e5e;"></div>
<div style="left:215.5px;top:358.4px;width:2046.5px;height:4px;background:#4a4a4a;"></div>
<div style="left:215.5px;top:362px;width:2046.5px;height:31px;background:#202020;"></div>
<div style="left:215.5px;top:392.2px;width:2046.5px;height:1.7px;background:#8e8e8e;"></div>
<div style="left:215.5px;top:393px;width:31.5px;height:1080px;background:#202020;"></div>
<div style="left:246.3px;top:393px;width:1.7px;height:1080px;background:#8e8e8e;"></div>
<div style="left:215.5px;top:362px;width:31.5px;height:31px;background:#202020;"></div>
<div style="left:246.3px;top:362px;width:1.7px;height:31px;background:#8e8e8e;"></div>
<svg style="left:0;top:0" width="2696" height="1576" viewBox="0 0 2696 1576"><path d="M216,370 H247 M225.500,362 V391" stroke="#d0d0d0" stroke-width="1.600" stroke-dasharray="1.600 2.400"/></svg>
<svg style="left:0;top:0" width="2696" height="1576" viewBox="0 0 2696 1576"><path d="M251.80,383V392M258.83,389V392M265.86,389V392M272.89,389V392M279.92,389V392M286.95,383V392M293.98,389V392M301.01,389V392M308.04,389V392M315.07,389V392M322.10,383V392M329.13,389V392M336.16,389V392M343.19,389V392M350.22,389V392M357.25,362.5V392M364.28,389V392M371.31,389V392M378.34,389V392M385.37,389V392M392.40,383V392M399.43,389V392M406.46,389V392M413.49,389V392M420.52,389V392M427.55,383V392M434.58,389V392M441.61,389V392M448.64,389V392M455.67,389V392M462.70,383V392M469.73,389V392M476.76,389V392M483.79,389V392M490.82,389V392M497.85,383V392M504.88,389V392M511.91,389V392M518.94,389V392M525.97,389V392M533.00,362.5V392M540.03,389V392M547.06,389V392M554.09,389V392M561.12,389V392M568.15,383V392M575.18,389V392M582.21,389V392M589.24,389V392M596.27,389V392M603.30,383V392M610.33,389V392M617.36,389V392M624.39,389V392M631.42,389V392M638.45,383V392M645.48,389V392M652.51,389V392M659.54,389V392M666.57,389V392M673.60,383V392M680.63,389V392M687.66,389V392M694.69,389V392M701.72,389V392M708.75,362.5V392M715.78,389V392M722.81,389V392M729.84,389V392M736.87,389V392M743.90,383V392M750.93,389V392M757.96,389V392M764.99,389V392M772.02,389V392M779.05,383V392M786.08,389V392M793.11,389V392M800.14,389V392M807.17,389V392M814.20,383V392M821.23,389V392M828.26,389V392M835.29,389V392M842.32,389V392M849.35,383V392M856.38,389V392M863.41,389V392M870.44,389V392M877.47,389V392M884.50,362.5V392M891.53,389V392M898.56,389V392M905.59,389V392M912.62,389V392M919.65,383V392M926.68,389V392M933.71,389V392M940.74,389V392M947.77,389V392M954.80,383V392M961.83,389V392M968.86,389V392M975.89,389V392M982.92,389V392M989.95,383V392M996.98,389V392M1004.01,389V392M1011.04,389V392M1018.07,389V392M1025.10,383V392M1032.13,389V392M1039.16,389V392M1046.19,389V392M1053.22,389V392M1060.25,362.5V392M1067.28,389V392M1074.31,389V392M1081.34,389V392M1088.37,389V392M1095.40,383V392M1102.43,389V392M1109.46,389V392M1116.49,389V392M1123.52,389V392M1130.55,383V392M1137.58,389V392M1144.61,389V392M1151.64,389V392M1158.67,389V392M1165.70,383V392M1172.73,389V392M1179.76,389V392M1186.79,389V392M1193.82,389V392M1200.85,383V392M1207.88,389V392M1214.91,389V392M1221.94,389V392M1228.97,389V392M1236.00,362.5V392M1243.03,389V392M1250.06,389V392M1257.09,389V392M1264.12,389V392M1271.15,383V392M1278.18,389V392M1285.21,389V392M1292.24,389V392M1299.27,389V392M1306.30,383V392M1313.33,389V392M1320.36,389V392M1327.39,389V392M1334.42,389V392M1341.45,383V392M1348.48,389V392M1355.51,389V392M1362.54,389V392M1369.57,389V392M1376.60,383V392M1383.63,389V392M1390.66,389V392M1397.69,389V392M1404.72,389V392M1411.75,362.5V392M1418.78,389V392M1425.81,389V392M1432.84,389V392M1439.87,389V392M1446.90,383V392M1453.93,389V392M1460.96,389V392M1467.99,389V392M1475.02,389V392M1482.05,383V392M1489.08,389V392M1496.11,389V392M1503.14,389V392M1510.17,389V392M1517.20,383V392M1524.23,389V392M1531.26,389V392M1538.29,389V392M1545.32,389V392M1552.35,383V392M1559.38,389V392M1566.41,389V392M1573.44,389V392M1580.47,389V392M1587.50,362.5V392M1594.53,389V392M1601.56,389V392M1608.59,389V392M1615.62,389V392M1622.65,383V392M1629.68,389V392M1636.71,389V392M1643.74,389V392M1650.77,389V392M1657.80,383V392M1664.83,389V392M1671.86,389V392M1678.89,389V392M1685.92,389V392M1692.95,383V392M1699.98,389V392M1707.01,389V392M1714.04,389V392M1721.07,389V392M1728.10,383V392M1735.13,389V392M1742.16,389V392M1749.19,389V392M1756.22,389V392M1763.25,362.5V392M1770.28,389V392M1777.31,389V392M1784.34,389V392M1791.37,389V392M1798.40,383V392M1805.43,389V392M1812.46,389V392M1819.49,389V392M1826.52,389V392M1833.55,383V392M1840.58,389V392M1847.61,389V392M1854.64,389V392M1861.67,389V392M1868.70,383V392M1875.73,389V392M1882.76,389V392M1889.79,389V392M1896.82,389V392M1903.85,383V392M1910.88,389V392M1917.91,389V392M1924.94,389V392M1931.97,389V392M1939.00,362.5V392M1946.03,389V392M1953.06,389V392M1960.09,389V392M1967.12,389V392M1974.15,383V392M1981.18,389V392M1988.21,389V392M1995.24,389V392M2002.27,389V392M2009.30,383V392M2016.33,389V392M2023.36,389V392M2030.39,389V392M2037.42,389V392M2044.45,383V392M2051.48,389V392M2058.51,389V392M2065.54,389V392M2072.57,389V392M2079.60,383V392M2086.63,389V392M2093.66,389V392M2100.69,389V392M2107.72,389V392M2114.75,362.5V392M2121.78,389V392M2128.81,389V392M2135.84,389V392M2142.87,389V392M2149.90,383V392M2156.93,389V392M2163.96,389V392M2170.99,389V392M2178.02,389V392M2185.05,383V392M2192.08,389V392M2199.11,389V392M2206.14,389V392M2213.17,389V392M2220.20,383V392M2227.23,389V392M2234.26,389V392M2241.29,389V392M2248.32,389V392M2255.35,383V392" stroke="#a8a8a8" stroke-width="1.5" fill="none"/></svg>
<span class="t" style="left:362.45px;top:363.77px;font-size:21.3px;line-height:21.3px;color:#f6f6f6;-webkit-text-stroke:0.5px #f6f6f6;">150</span>
<span class="t" style="left:538.20px;top:363.77px;font-size:21.3px;line-height:21.3px;color:#f6f6f6;-webkit-text-stroke:0.5px #f6f6f6;">100</span>
<span class="t" style="left:713.95px;top:363.77px;font-size:21.3px;line-height:21.3px;color:#f6f6f6;-webkit-text-stroke:0.5px #f6f6f6;">50</span>
<span class="t" style="left:889.70px;top:363.77px;font-size:21.3px;line-height:21.3px;color:#f6f6f6;-webkit-text-stroke:0.5px #f6f6f6;">0</span>
<span class="t" style="left:1065.45px;top:363.77px;font-size:21.3px;line-height:21.3px;color:#f6f6f6;-webkit-text-stroke:0.5px #f6f6f6;">50</span>
<span class="t" style="left:1241.20px;top:363.77px;font-size:21.3px;line-height:21.3px;color:#f6f6f6;-webkit-text-stroke:0.5px #f6f6f6;">100</span>
<span class="t" style="left:1416.95px;top:363.77px;font-size:21.3px;line-height:21.3px;color:#f6f6f6;-webkit-text-stroke:0.5px #f6f6f6;">150</span>
<span class="t" style="left:1592.70px;top:363.77px;font-size:21.3px;line-height:21.3px;color:#f6f6f6;-webkit-text-stroke:0.5px #f6f6f6;">200</span>
<span class="t" style="left:1768.45px;top:363.77px;font-size:21.3px;line-height:21.3px;color:#f6f6f6;-webkit-text-stroke:0.5px #f6f6f6;">250</span>
<span class="t" style="left:1944.20px;top:363.77px;font-size:21.3px;line-height:21.3px;color:#f6f6f6;-webkit-text-stroke:0.5px #f6f6f6;">300</span>
<span class="t" style="left:2119.95px;top:363.77px;font-size:21.3px;line-height:21.3px;color:#f6f6f6;-webkit-text-stroke:0.5px #f6f6f6;">350</span>
<svg style="left:0;top:0" width="2696" height="1576" viewBox="0 0 2696 1576"><path d="M243,398.44H246M243,405.47H246M216,412.50H246M243,419.53H246M243,426.56H246M243,433.59H246M243,440.62H246M237,447.65H246M243,454.68H246M243,461.71H246M243,468.74H246M243,475.77H246M237,482.80H246M243,489.83H246M243,496.86H246M243,503.89H246M243,510.92H246M237,517.95H246M243,524.98H246M243,532.01H246M243,539.04H246M243,546.07H246M237,553.10H246M243,560.13H246M243,567.16H246M243,574.19H246M243,581.22H246M216,588.25H246M243,595.28H246M243,602.31H246M243,609.34H246M243,616.37H246M237,623.40H246M243,630.43H246M243,637.46H246M243,644.49H246M243,651.52H246M237,658.55H246M243,665.58H246M243,672.61H246M243,679.64H246M243,686.67H246M237,693.70H246M243,700.73H246M243,707.76H246M243,714.79H246M243,721.82H246M237,728.85H246M243,735.88H246M243,742.91H246M243,749.94H246M243,756.97H246M216,764.00H246M243,771.03H246M243,778.06H246M243,785.09H246M243,792.12H246M237,799.15H246M243,806.18H246M243,813.21H246M243,820.24H246M243,827.27H246M237,834.30H246M243,841.33H246M243,848.36H246M243,855.39H246M243,862.42H246M237,869.45H246M243,876.48H246M243,883.51H246M243,890.54H246M243,897.57H246M237,904.60H246M243,911.63H246M243,918.66H246M243,925.69H246M243,932.72H246M216,939.75H246M243,946.78H246M243,953.81H246M243,960.84H246M243,967.87H246M237,974.90H246M243,981.93H246M243,988.96H246M243,995.99H246M243,1003.02H246M237,1010.05H246M243,1017.08H246M243,1024.11H246M243,1031.14H246M243,1038.17H246M237,1045.20H246M243,1052.23H246M243,1059.26H246M243,1066.29H246M243,1073.32H246M237,1080.35H246M243,1087.38H246M243,1094.41H246M243,1101.44H246M243,1108.47H246M216,1115.50H246M243,1122.53H246M243,1129.56H246M243,1136.59H246M243,1143.62H246M237,1150.65H246M243,1157.68H246M243,1164.71H246M243,1171.74H246M243,1178.77H246M237,1185.80H246M243,1192.83H246M243,1199.86H246M243,1206.89H246M243,1213.92H246M237,1220.95H246M243,1227.98H246M243,1235.01H246M243,1242.04H246M243,1249.07H246M237,1256.10H246M243,1263.13H246M243,1270.16H246M243,1277.19H246M243,1284.22H246M216,1291.25H246M243,1298.28H246M243,1305.31H246M243,1312.34H246M243,1319.37H246M237,1326.40H246M243,1333.43H246M243,1340.46H246M243,1347.49H246M243,1354.52H246M237,1361.55H246M243,1368.58H246M243,1375.61H246M243,1382.64H246M243,1389.67H246M237,1396.70H246M243,1403.73H246M243,1410.76H246M243,1417.79H246M243,1424.82H246M237,1431.85H246M243,1438.88H246M243,1445.91H246M243,1452.94H246M243,1459.97H246M216,1467.00H246" stroke="#a8a8a8" stroke-width="1.5" fill="none"/></svg>
<span class="t" style="left:220.20px;top:414.17px;font-size:21.3px;line-height:21.3px;color:#f6f6f6;-webkit-text-stroke:0.5px #f6f6f6;">0</span>
<span class="t" style="left:220.20px;top:589.92px;font-size:21.3px;line-height:21.3px;color:#f6f6f6;-webkit-text-stroke:0.5px #f6f6f6;">5</span>
<span class="t" style="left:220.20px;top:608.62px;font-size:21.3px;line-height:21.3px;color:#f6f6f6;-webkit-text-stroke:0.5px #f6f6f6;">0</span>
<span class="t" style="left:220.20px;top:765.67px;font-size:21.3px;line-height:21.3px;color:#f6f6f6;-webkit-text-stroke:0.5px #f6f6f6;">1</span>
<span class="t" style="left:220.20px;top:784.37px;font-size:21.3px;line-height:21.3px;color:#f6f6f6;-webkit-text-stroke:0.5px #f6f6f6;">0</span>
<span class="t" style="left:220.20px;top:803.07px;font-size:21.3px;line-height:21.3px;color:#f6f6f6;-webkit-text-stroke:0.5px #f6f6f6;">0</span>
<span class="t" style="left:220.20px;top:941.42px;font-size:21.3px;line-height:21.3px;color:#f6f6f6;-webkit-text-stroke:0.5px #f6f6f6;">1</span>
<span class="t" style="left:220.20px;top:960.12px;font-size:21.3px;line-height:21.3px;color:#f6f6f6;-webkit-text-stroke:0.5px #f6f6f6;">5</span>
<span class="t" style="left:220.20px;top:978.82px;font-size:21.3px;line-height:21.3px;color:#f6f6f6;-webkit-text-stroke:0.5px #f6f6f6;">0</span>
<span class="t" style="left:220.20px;top:1117.17px;font-size:21.3px;line-height:21.3px;color:#f6f6f6;-webkit-text-stroke:0.5px #f6f6f6;">2</span>
<span class="t" style="left:220.20px;top:1135.87px;font-size:21.3px;line-height:21.3px;color:#f6f6f6;-webkit-text-stroke:0.5px #f6f6f6;">0</span>
<span class="t" style="left:220.20px;top:1154.57px;font-size:21.3px;line-height:21.3px;color:#f6f6f6;-webkit-text-stroke:0.5px #f6f6f6;">0</span>
<span class="t" style="left:220.20px;top:1292.92px;font-size:21.3px;line-height:21.3px;color:#f6f6f6;-webkit-text-stroke:0.5px #f6f6f6;">2</span>
<span class="t" style="left:220.20px;top:1311.62px;font-size:21.3px;line-height:21.3px;color:#f6f6f6;-webkit-text-stroke:0.5px #f6f6f6;">5</span>
<span class="t" style="left:220.20px;top:1330.32px;font-size:21.3px;line-height:21.3px;color:#f6f6f6;-webkit-text-stroke:0.5px #f6f6f6;">0</span>
<span class="t" style="left:220.20px;top:1468.67px;font-size:21.3px;line-height:21.3px;color:#f6f6f6;-webkit-text-stroke:0.5px #f6f6f6;">3</span>
<span class="t" style="left:220.20px;top:1487.37px;font-size:21.3px;line-height:21.3px;color:#f6f6f6;-webkit-text-stroke:0.5px #f6f6f6;">0</span>
<span class="t" style="left:220.20px;top:1506.07px;font-size:21.3px;line-height:21.3px;color:#f6f6f6;-webkit-text-stroke:0.5px #f6f6f6;">0</span>
<svg style="left:0;top:0" width="2696" height="1576" viewBox="0 0 2696 1576"><path d="M756.500,362 V392" stroke="#e8e8e8" stroke-width="2" stroke-dasharray="1.600 2.400"/><path d="M216,554.500 H246" stroke="#e8e8e8" stroke-width="2" stroke-dasharray="1.600 2.400"/></svg>
<div style="left:2262px;top:360px;width:30px;height:1113px;background:#4b4b4b;"></div>
<div style="left:2263px;top:500px;width:28px;height:832px;background:#6c6c6c;border-radius:14px;"></div>
<svg style="left:0;top:0" width="2696" height="1576" viewBox="0 0 2696 1576"><polyline points="2269.0,379.5 2277,371.5 2285.0,379.5" fill="none" stroke="#9a9a9a" stroke-width="2.2" stroke-linecap="square" stroke-linejoin="miter"/><polyline points="2269.0,1455.0 2277,1463.0 2285.0,1455.0" fill="none" stroke="#9a9a9a" stroke-width="2.2" stroke-linecap="square" stroke-linejoin="miter"/></svg>
<div style="left:2292px;top:304px;width:6px;height:1203px;background:#424242;"></div>
<div style="left:215.5px;top:1473px;width:2076.5px;height:34px;background:#535353;"></div>
<div style="left:215.5px;top:1472px;width:2076.5px;height:1.5px;background:#4a4a4a;"></div>
<span class="t" style="left:245.00px;top:1480.22px;font-size:21px;line-height:21px;color:#f0f0f0;font-weight:700;transform:scaleX(0.9401);transform-origin:0 0;">124%</span>
<svg style="left:0;top:0" width="2696" height="1576" viewBox="0 0 2696 1576"><polyline points="329.5,1485.5 336.5,1492.5 343.5,1485.5" fill="none" stroke="#e0e0e0" stroke-width="2.4" stroke-linecap="square" stroke-linejoin="miter"/></svg>
<svg style="left:0;top:0" width="2696" height="1576" viewBox="0 0 2696 1576"><path d="M370.500,1482 v16.500" stroke="#8a8a8a" stroke-width="3.500"/><path d="M385.500,1482 v16.500 l-10.500,-8.250z" fill="#8a8a8a"/><path d="M422.500,1482.500 v15.500 l-9.500,-7.750z" fill="#8a8a8a"/></svg>
<div style="left:450.5px;top:1474px;width:178px;height:30px;background:#454545;border:1.5px solid #686868;border-radius:5px;box-sizing:border-box;"></div>
<div style="left:592px;top:1475px;width:1.5px;height:28px;background:#686868;"></div>
<span class="t" style="left:459.00px;top:1480.22px;font-size:21px;line-height:21px;color:#f0f0f0;font-weight:700;">1</span>
<svg style="left:0;top:0" width="2696" height="1576" viewBox="0 0 2696 1576"><polyline points="603.5,1485.5 610.5,1492.5 617.5,1485.5" fill="none" stroke="#e8e8e8" stroke-width="2.4" stroke-linecap="square" stroke-linejoin="miter"/></svg>
<svg style="left:0;top:0" width="2696" height="1576" viewBox="0 0 2696 1576"><path d="M656.500,1482.500 v15.500 l9.500,-7.750z" fill="#8a8a8a"/><path d="M693.500,1482 v16.500 l10.500,-8.250z" fill="#8a8a8a"/><path d="M708.500,1482 v16.500" stroke="#8a8a8a" stroke-width="3.500"/></svg>
<svg style="left:0;top:0" width="2696" height="1576" viewBox="0 0 2696 1576"><path d="M747,1498 a12,12 0 1 1 22,-6 h-9 v-8" fill="none" stroke="#cfcfcf" stroke-width="4.500"/><path d="M771,1499 h7 l-3.500,4z" fill="#cfcfcf"/></svg>
<span class="t" style="left:808.00px;top:1480.22px;font-size:21px;line-height:21px;color:#f0f0f0;font-weight:700;transform:scaleX(0.9275);transform-origin:0 0;">[Basic] (working)</span>
<svg style="left:0;top:0" width="2696" height="1576" viewBox="0 0 2696 1576"><polyline points="1013.5,1485.5 1020.5,1492.5 1027.5,1485.5" fill="none" stroke="#e0e0e0" stroke-width="2.4" stroke-linecap="square" stroke-linejoin="miter"/></svg>
<div style="left:1061px;top:1479px;width:21px;height:21px;background:#4caf50;border-radius:50%;"></div>
<span class="t" style="left:1092.00px;top:1480.22px;font-size:21px;line-height:21px;color:#f0f0f0;font-weight:700;transform:scaleX(0.9521);transform-origin:0 0;">No errors</span>
<svg style="left:0;top:0" width="2696" height="1576" viewBox="0 0 2696 1576"><polyline points="1219.0,1485.5 1226,1492.5 1233.0,1485.5" fill="none" stroke="#cfcfcf" stroke-width="2.4" stroke-linecap="square" stroke-linejoin="miter"/></svg>
<div style="left:1243.5px;top:1474px;width:973px;height:33px;background:#4b4b4b;"></div>
<div style="left:1320px;top:1474px;width:822px;height:31px;background:#6c6c6c;border-radius:16px;"></div>
<svg style="left:0;top:0" width="2696" height="1576" viewBox="0 0 2696 1576"><polyline points="1265.0,1482.0 1257.0,1490 1265.0,1498.0" fill="none" stroke="#9a9a9a" stroke-width="2.2" stroke-linecap="square" stroke-linejoin="miter"/><polyline points="2196.0,1482.0 2204.0,1490 2196.0,1498.0" fill="none" stroke="#9a9a9a" stroke-width="2.2" stroke-linecap="square" stroke-linejoin="miter"/></svg>
<svg style="left:0;top:0" width="2696" height="1576" viewBox="0 0 2696 1576"><rect x="2228.500" y="1480.500" width="28" height="20" fill="none" stroke="#d8d8d8" stroke-width="2"/><line x1="2242.500" y1="1480" x2="2242.500" y2="1501" stroke="#d8d8d8" stroke-width="2"/></svg>
<svg style="left:0;top:0" width="2696" height="1576" viewBox="0 0 2696 1576"><rect x="2288.0" y="1484.0" width="1.6" height="1.6" fill="#7a7a7a"/><rect x="2284.6" y="1487.4" width="1.6" height="1.6" fill="#7a7a7a"/><rect x="2288.0" y="1487.4" width="1.6" height="1.6" fill="#7a7a7a"/><rect x="2281.2" y="1490.8" width="1.6" height="1.6" fill="#7a7a7a"/><rect x="2284.6" y="1490.8" width="1.6" height="1.6" fill="#7a7a7a"/><rect x="2288.0" y="1490.8" width="1.6" height="1.6" fill="#7a7a7a"/><rect x="2277.8" y="1494.2" width="1.6" height="1.6" fill="#7a7a7a"/><rect x="2281.2" y="1494.2" width="1.6" height="1.6" fill="#7a7a7a"/><rect x="2284.6" y="1494.2" width="1.6" height="1.6" fill="#7a7a7a"/><rect x="2288.0" y="1494.2" width="1.6" height="1.6" fill="#7a7a7a"/><rect x="2274.4" y="1497.6" width="1.6" height="1.6" fill="#7a7a7a"/><rect x="2277.8" y="1497.6" width="1.6" height="1.6" fill="#7a7a7a"/><rect x="2281.2" y="1497.6" width="1.6" height="1.6" fill="#7a7a7a"/><rect x="2284.6" y="1497.6" width="1.6" height="1.6" fill="#7a7a7a"/><rect x="2288.0" y="1497.6" width="1.6" height="1.6" fill="#7a7a7a"/><rect x="2271.0" y="1501.0" width="1.6" height="1.6" fill="#7a7a7a"/><rect x="2274.4" y="1501.0" width="1.6" height="1.6" fill="#7a7a7a"/><rect x="2277.8" y="1501.0" width="1.6" height="1.6" fill="#7a7a7a"/><rect x="2281.2" y="1501.0" width="1.6" height="1.6" fill="#7a7a7a"/><rect x="2284.6" y="1501.0" width="1.6" height="1.6" fill="#7a7a7a"/><rect x="2288.0" y="1501.0" width="1.6" height="1.6" fill="#7a7a7a"/></svg>
<div style="left:888.0px;top:416.5px;width:738.7px;height:1042.6000000000001px;background:#000;"></div>
<div style="left:884.5px;top:412.5px;width:738.2px;height:1041.9px;background:#fff;"></div>
<svg style="left:920px;top:460px" width="840" height="491" viewBox="0 0 2520 1473">
<defs>
<clipPath id="imgc"><rect x="10" y="20" width="1983" height="1373"/></clipPath>
<filter id="b10" filterUnits="userSpaceOnUse" x="-200" y="-200" width="2920" height="1900"><feGaussianBlur stdDeviation="10"/></filter>
<filter id="b6" filterUnits="userSpaceOnUse" x="-200" y="-200" width="2920" height="1900"><feGaussianBlur stdDeviation="6"/></filter>
<filter id="b4" filterUnits="userSpaceOnUse" x="-200" y="-200" width="2920" height="1900"><feGaussianBlur stdDeviation="4"/></filter>
<filter id="b2" filterUnits="userSpaceOnUse" x="-200" y="-200" width="2920" height="1900"><feGaussianBlur stdDeviation="2"/></filter>
<radialGradient id="sp1" cx="0.62" cy="0.32" r="0.8"><stop offset="0" stop-color="#f46a4b"/><stop offset="0.55" stop-color="#f15a3b"/><stop offset="1" stop-color="#eb4727"/></radialGradient>
<radialGradient id="sp2" cx="0.4" cy="0.5" r="0.65"><stop offset="0" stop-color="#de2b0c"/><stop offset="0.7" stop-color="#e83a1b"/><stop offset="1" stop-color="#ef5032"/></radialGradient>
<radialGradient id="sp3" cx="0.5" cy="0.4" r="0.7"><stop offset="0" stop-color="#f05a3b"/><stop offset="1" stop-color="#ea4424"/></radialGradient>
</defs>
<g clip-path="url(#imgc)">
<rect x="10" y="20" width="1983" height="1373" fill="#f8977b"/>
<!-- lighter zone right of thick wire -->
<path d="M1800,20 L1993,20 L1993,1393 L1900,1393 C1860,1100 1760,800 1740,500 C1730,300 1760,150 1800,20Z" fill="#f89d83" filter="url(#b10)"/>
<ellipse cx="1815" cy="890" rx="95" ry="330" fill="#f9a990" transform="rotate(-7 1815 890)" filter="url(#b6)"/>
<!-- pale rods lower-left -->
<path d="M10,845 L500,940 L975,1014 L1620,1072 L1620,1126 L975,1070 L500,1008 L10,925 Z" fill="#f9a68c" filter="url(#b4)"/>
<path d="M10,895 L500,985 L975,1049 L1620,1108 L1620,1128 L975,1072 L500,1010 L10,927 Z" fill="#f6947a" filter="url(#b4)"/>
<path d="M10,1180 L350,1258 L580,1393 L400,1393 L10,1252 Z" fill="#f9a68c" filter="url(#b6)"/>
<path d="M885,1245 C895,1180 1000,1172 1100,1180 L1700,1215 C1790,1228 1785,1330 1700,1335 L1000,1330 C930,1322 875,1305 885,1245Z" fill="#f9a990" filter="url(#b6)"/>
<!-- thin red wires -->
<path d="M918,10 C815,190 700,400 648,560 C610,700 595,800 600,900 C605,1000 610,1060 640,1160 C660,1230 700,1320 770,1410" fill="none" stroke="#e63818" stroke-width="46" filter="url(#b6)"/>
<path d="M1530,0 C1400,90 1330,150 1290,200 C1200,320 1130,430 1095,490 C1050,570 1010,680 980,790 C950,900 925,1000 928,1190" fill="none" stroke="#e83c1a" stroke-width="42" filter="url(#b6)"/>
<path d="M1255,1115 L1250,1190" fill="none" stroke="#ea4020" stroke-width="30" filter="url(#b4)"/>
<!-- tube right of sphere1 -->
<path d="M1490,430 L1660,515" stroke="#f9a78d" stroke-width="86" fill="none" filter="url(#b2)"/>
<path d="M1490,462 L1660,547" stroke="#f48d71" stroke-width="26" fill="none" filter="url(#b4)"/>
<!-- U tube -->
<path id="utube" d="M1235,348 C1050,268 800,194 560,192 C300,192 108,310 108,425 C108,530 280,568 650,668" fill="none" stroke="#f27c5b" stroke-width="104" stroke-linecap="round" filter="url(#b2)"/>
<path d="M1235,348 C1050,268 800,194 560,192 C300,192 108,310 108,425 C108,530 280,568 650,668" fill="none" stroke="#f48f71" stroke-width="70" filter="url(#b6)" transform="translate(610,430) scale(1.02,1.045) translate(-610,-430)"/>
<path d="M1235,348 C1050,268 800,194 560,192 C300,192 108,310 108,425 C108,530 280,568 650,668" fill="none" stroke="#f9a68b" stroke-width="46" filter="url(#b6)" transform="translate(610,430) scale(1.04,1.09) translate(-610,-430)"/>
<!-- sphere 1 -->
<circle cx="1326" cy="411" r="227" fill="url(#sp1)" filter="url(#b2)"/>
<path d="M1490,270 A227,227 0 0 1 1545,470" fill="none" stroke="#f7866a" stroke-width="14" filter="url(#b4)"/>
<ellipse cx="1176" cy="384" rx="74" ry="94" fill="#ea3d1d" filter="url(#b2)"/>
<path d="M1120,290 L1250,345 L1240,440 L1100,378Z" fill="#f9a78d" filter="url(#b2)"/>
<path d="M1105,350 L1242,410 L1240,440 L1100,380Z" fill="#f38a6e" filter="url(#b2)"/>
<!-- pale block (left face + top) -->
<path d="M575,553 L750,545 L990,625 L940,935 L700,872 L515,848 Z" fill="#f9a98f" filter="url(#b2)"/>
<path d="M575,553 L750,580 L710,872 L520,852 Z" fill="#f8a086" filter="url(#b2)"/>
<path d="M575,553 L750,545 L990,625 L750,580 Z" fill="#f9a58b"/>
<ellipse cx="632" cy="738" rx="50" ry="66" fill="#ec4b2b" transform="rotate(10 632 738)" filter="url(#b2)"/>
<path d="M556,628 L690,668 L688,730 C670,690 640,675 600,690 L548,680Z" fill="#f9a78d" filter="url(#b2)"/>
<!-- sphere 2 dark -->
<ellipse cx="1050" cy="798" rx="138" ry="186" fill="url(#sp2)" filter="url(#b2)"/>
<path d="M1135,660 C1175,720 1185,800 1170,860" fill="none" stroke="#f4785c" stroke-width="10" filter="url(#b4)"/>
<!-- block front face over sphere 2 -->
<path d="M750,580 L990,628 L940,935 L710,872 Z" fill="#faaf96" filter="url(#b2)"/>
<!-- pale shape behind dark cube -->
<path d="M1310,712 L1460,745 L1568,858 L1380,818 Z" fill="#f8a087" filter="url(#b2)"/>
<!-- dark cube -->
<path d="M1240,680 L1380,820 L1262,1040 L1145,930 L1195,735 Z" fill="#f05738" filter="url(#b2)"/>
<path d="M1380,820 L1567,860 L1442,1072 L1262,1040 Z" fill="#ec4525" filter="url(#b2)"/>
<ellipse cx="1240" cy="850" rx="50" ry="78" fill="#e72608" transform="rotate(-8 1240 850)" filter="url(#b2)"/>
<path d="M1185,762 L1285,800 L1290,860 C1260,835 1230,830 1190,842Z" fill="#f9a58b" filter="url(#b2)"/>
<!-- rod + small bead -->
<path d="M1572,906 L1695,940" stroke="#f9a68c" stroke-width="78" stroke-linecap="round" fill="none" filter="url(#b2)"/>
<ellipse cx="1640" cy="1025" rx="100" ry="98" fill="url(#sp3)" filter="url(#b4)"/>
<ellipse cx="1632" cy="972" rx="46" ry="26" fill="#e72608" filter="url(#b4)" transform="rotate(12 1632 972)"/>
<!-- thick foreground wire -->
<path d="M1745,0 C1734,33 1698,142 1682,200 C1666,258 1654,300 1648,350 C1642,400 1641,450 1643,500 C1645,550 1652,598 1658,650 C1664,702 1668,733 1682,810 C1696,887 1727,1018 1745,1110 C1763,1202 1781,1308 1790,1360 C1799,1412 1798,1410 1800,1420 L1895,1420 C1893,1410 1894,1412 1885,1360 C1876,1308 1858,1202 1840,1110 C1822,1018 1795,895 1780,810 C1765,725 1757,660 1748,600 C1739,540 1728,492 1727,450 C1726,408 1732,392 1742,350 C1752,308 1763,258 1790,200 C1817,142 1886,33 1905,0 Z" fill="#e5340f" filter="url(#b6)"/>
<path d="M1890,0 C1871,33 1805,142 1778,200 C1751,258 1741,308 1730,350 C1719,392 1713,408 1714,450 C1715,492 1727,540 1736,600 C1745,660 1752,725 1767,810 C1782,895 1808,1018 1826,1110 C1844,1202 1864,1318 1872,1360" fill="none" stroke="#ee4b2b" stroke-width="28" filter="url(#b6)"/>
</g></svg>
<svg style="left:0;top:0" width="2696" height="1576" viewBox="0 0 2696 1576"><rect x="923.250" y="467.250" width="661.250" height="457" fill="none" stroke="#e0281f" stroke-width="1.1"/></svg>
<svg style="left:0;top:0" width="2696" height="1576" viewBox="0 0 2696 1576"><g transform="translate(954,468)"><rect x="-15.500" y="-7.500" width="31" height="15" rx="7.500" fill="#fff"/><g fill="none" stroke="#1473e6" stroke-width="3"><rect x="-12" y="-4.500" width="14" height="9" rx="4.500"/><rect x="-2" y="-4.500" width="14" height="9" rx="4.500"/></g></g></svg>
<span class="t" style="left:1163.75px;top:441.88px;font-size:45.5px;line-height:45.5px;color:#000;letter-spacing:1.147px;-webkit-text-stroke:0.9px #000;">A Closer</span>
<span class="t" style="left:1033.80px;top:810.11px;font-size:195.5px;line-height:195.5px;color:#000;font-weight:700;transform:scaleX(0.9428);transform-origin:0 0;">Look</span>
<span class="t" style="left:1047.40px;top:1063.75px;font-size:20.5px;line-height:20.5px;color:#111;letter-spacing:1.017px;-webkit-text-stroke:0.35px #111;">Exploring design through everyday objects</span>
<span class="t" style="left:1263.00px;top:1222.94px;font-size:17.2px;line-height:17.2px;color:#111;transform:scaleX(0.9590);transform-origin:0 0;-webkit-text-stroke:0.25px #111;">Et everum, ut opta velias magnatibus,</span>
<span class="t" style="left:1263.00px;top:1243.76px;font-size:17.2px;line-height:17.2px;color:#111;transform:scaleX(0.9728);transform-origin:0 0;-webkit-text-stroke:0.25px #111;">inulpa sequi dolo tet voluptatum aliciis</span>
<span class="t" style="left:1263.00px;top:1264.58px;font-size:17.2px;line-height:17.2px;color:#111;letter-spacing:-0.147px;-webkit-text-stroke:0.25px #111;">dis dolupta tistint videro dus et ut</span>
<span class="t" style="left:1263.00px;top:1285.40px;font-size:17.2px;line-height:17.2px;color:#111;transform:scaleX(0.9627);transform-origin:0 0;-webkit-text-stroke:0.25px #111;">omnimagnam quam ni tem faccum audam,</span>
<span class="t" style="left:1263.00px;top:1306.22px;font-size:17.2px;line-height:17.2px;color:#111;transform:scaleX(0.9716);transform-origin:0 0;-webkit-text-stroke:0.25px #111;">vel ipidemodi aceptat iatur, omnitat laut</span>
<span class="t" style="left:1263.00px;top:1327.04px;font-size:17.2px;line-height:17.2px;color:#111;transform:scaleX(0.9742);transform-origin:0 0;-webkit-text-stroke:0.25px #111;">fugit qui id que dis aut alignia sitati nemque</span>
<span class="t" style="left:1263.00px;top:1347.86px;font-size:17.2px;line-height:17.2px;color:#111;transform:scaleX(0.9651);transform-origin:0 0;-webkit-text-stroke:0.25px #111;">volorei cabores sinvel eos esedis magnis</span>
<span class="t" style="left:1263.00px;top:1368.68px;font-size:17.2px;line-height:17.2px;color:#111;transform:scaleX(0.9733);transform-origin:0 0;-webkit-text-stroke:0.25px #111;">rentio eos ditatquuntem quos.</span>
<span class="t" style="left:924.50px;top:1405.13px;font-size:13.2px;line-height:13.2px;color:#111;font-weight:700;letter-spacing:0.016px;">Museum of Art &amp; Design</span>
<svg style="left:0;top:0" width="2696" height="1576" viewBox="0 0 2696 1576"><g transform="translate(974.800,1345.700)"><path d="M0,12 L26,0 L52,12 Z" fill="#000"/><rect x="0" y="13.500" width="52" height="1.500" fill="#c00000"/><rect x="0" y="15.500" width="52" height="29" fill="#000"/><path d="M1,16 v28 M5,16 v28 M47,16 v28 M51,16 v28" stroke="#e00000" stroke-width="1.400"/><rect x="16.500" y="17" width="17.500" height="25" fill="#fff" stroke="#c00000" stroke-width="0.800"/><rect x="25" y="39" width="1.500" height="1.500" fill="#c00000"/><rect x="2" y="46" width="48" height="2" fill="#c00000"/><rect x="0" y="49.500" width="52" height="2" fill="#900000"/></g></svg>
<svg style="left:0;top:0" width="2696" height="1576" viewBox="0 0 2696 1576"><g fill="none" stroke="#e0281f" stroke-width="1.1"><rect x="1162.300" y="440.800" width="183.100" height="40.300"/><rect x="1032.300" y="809.700" width="442.700" height="166.300"/><rect x="1046.200" y="1064.200" width="428.800" height="17.100"/><rect x="923.400" y="1397" width="155.300" height="20.200"/></g></svg>
<svg style="left:0;top:0" width="2696" height="1576" viewBox="0 0 2696 1576"><path d="M884.5,450.5H1622.7M884.5,678.9H1622.7M884.5,696.7H1622.7M884.5,925.3H1622.7M884.5,942.5H1622.7M884.5,1171.2H1622.7M884.5,1188.8H1622.7M884.5,1417.4H1622.7" stroke="#4fe8f0" stroke-width="1.2" fill="none"/></svg>
<svg style="left:0;top:0" width="2696" height="1576" viewBox="0 0 2696 1576"><path d="M923.250,450.500 H1584.500 M923.250,1417.400 H1584.500" stroke="#d66fe0" stroke-width="1.200" fill="none"/><path d="M923.250,450.500 V1417.400 M1584.500,450.500 V1417.400 M1245.200,450.500 V1417.400 M1262.500,450.500 V1417.400" stroke="#8f4fd8" stroke-width="1" fill="none"/></svg>
<div style="left:68px;top:304px;width:143px;height:1203px;background:#535353;"></div>
<div style="left:68px;top:304px;width:143px;height:23px;background:#424242;"></div>
<div style="left:211px;top:304px;width:4.5px;height:1203px;background:#424242;"></div>
<svg style="left:0;top:0" width="2696" height="1576" viewBox="0 0 2696 1576"><path d="M85,311 l-4.500,4.500 4.500,4.500 M93.500,311 l-4.500,4.500 4.500,4.500" fill="none" stroke="#d0d0d0" stroke-width="1.800"/></svg>
<svg style="left:0;top:0" width="2696" height="1576" viewBox="0 0 2696 1576"><rect x="119.5" y="334" width="2" height="7" fill="#3a3a3a"/><rect x="123.5" y="334" width="2" height="7" fill="#3a3a3a"/><rect x="127.5" y="334" width="2" height="7" fill="#3a3a3a"/><rect x="131.5" y="334" width="2" height="7" fill="#3a3a3a"/><rect x="135.5" y="334" width="2" height="7" fill="#3a3a3a"/><rect x="139.5" y="334" width="2" height="7" fill="#3a3a3a"/><rect x="143.5" y="334" width="2" height="7" fill="#3a3a3a"/><rect x="147.5" y="334" width="2" height="7" fill="#3a3a3a"/><rect x="151.5" y="334" width="2" height="7" fill="#3a3a3a"/><rect x="155.5" y="334" width="2" height="7" fill="#3a3a3a"/></svg>
<div style="left:74px;top:502px;width:132px;height:1.5px;background:#4a4a4a;"></div>
<div style="left:74px;top:652.5px;width:132px;height:1.5px;background:#4a4a4a;"></div>
<div style="left:74px;top:754px;width:132px;height:1.5px;background:#4a4a4a;"></div>
<div style="left:74px;top:856px;width:132px;height:1.5px;background:#4a4a4a;"></div>
<div style="left:82px;top:358.5px;width:55.5px;height:42.5px;background:#2e2e2e;border-radius:5px;"></div>
<svg style="left:0;top:0" width="2696" height="1576" viewBox="0 0 2696 1576"><path d="M101,367 v30 l8,-8.500 h13z" fill="none" stroke="#d2d2d2" stroke-width="2.400" stroke-linejoin="miter"/></svg>
<svg style="left:0;top:0" width="2696" height="1576" viewBox="0 0 2696 1576"><path d="M160,365 v33 l9,-9.500 h14z" fill="#d2d2d2"/></svg>
<svg style="left:0;top:0" width="2696" height="1576" viewBox="0 0 2696 1576"><g fill="none" stroke="#d2d2d2" stroke-width="2.600"><path d="M99,439 v-25.500 h12 l9,9 v6"/><path d="M111,413.500 v9 h9"/><path d="M99,439 h14"/></g><path d="M116.500,428.500 v15 l4.500,-4.500 h7z" fill="#d2d2d2"/></svg>
<svg style="left:0;top:0" width="2696" height="1576" viewBox="0 0 2696 1576"><path d="M153.700,414 v28 M186,414 v28" stroke="#d2d2d2" stroke-width="4.200"/><path d="M163,427 h14" stroke="#d2d2d2" stroke-width="2.600"/><path d="M164.500,420.500 v13 l-7.500,-6.500z M175.500,420.500 v13 l7.500,-6.500z" fill="#d2d2d2"/></svg>
<svg style="left:0;top:0" width="2696" height="1576" viewBox="0 0 2696 1576"><g fill="none" stroke="#d2d2d2" stroke-width="4.400"><path d="M98.200,472 v17.500 h23.600 v-17.500"/></g><g fill="#d2d2d2"><rect x="102.500" y="482" width="3.600" height="3.600"/><rect x="108.200" y="482" width="3.600" height="3.600"/><rect x="114" y="482" width="3.600" height="3.600"/><rect x="102.500" y="476" width="3.600" height="3.600"/><rect x="114" y="476" width="3.600" height="3.600"/><path d="M100.500,462.500 l2.500,-2.500 5.500,5.500 3,-3 v9.500 h-9.500 l3,-3z"/></g></svg>
<svg style="left:0;top:0" width="2696" height="1576" viewBox="0 0 2696 1576"><g fill="none" stroke="#d2d2d2" stroke-width="4.400"><path d="M158.200,472 v17.500 h23.600 v-17.500"/></g><g fill="#d2d2d2"><rect x="162.500" y="482" width="3.600" height="3.600"/><rect x="168.200" y="482" width="3.600" height="3.600"/><rect x="174" y="482" width="3.600" height="3.600"/><rect x="162.500" y="476" width="3.600" height="3.600"/><rect x="168.200" y="476" width="3.600" height="3.600"/><rect x="174" y="476" width="3.600" height="3.600"/><path d="M172,472 l-2.500,-2.500 6,-6 -3,-3 h9.500 v9.500 l-3,-3z"/></g></svg>
<span class="t" style="left:94.00px;top:507.75px;font-size:44px;line-height:44px;color:#d2d2d2;font-weight:700;font-family:'Liberation Serif',serif;">T</span>
<svg style="left:0;top:0" width="2696" height="1576" viewBox="0 0 2696 1576"><path d="M135,550 v-7 l-7,7z" fill="#d2d2d2"/><path d="M156,543 l28,-27" stroke="#d2d2d2" stroke-width="3"/></svg>
<svg style="left:0;top:0" width="2696" height="1576" viewBox="0 0 2696 1576"><path d="M101,592 v-29 l21,21" fill="none" stroke="#d2d2d2" stroke-width="2.200"/><path d="M135,598 v-7 l-7,7z" fill="#d2d2d2"/></svg>
<svg style="left:0;top:0" width="2696" height="1576" viewBox="0 0 2696 1576"><g transform="translate(169.500,578) rotate(45)"><rect x="-5" y="-19" width="10" height="6" fill="#d2d2d2"/><rect x="-5" y="-11" width="10" height="20" fill="#d2d2d2"/><path d="M-5,11 h10 l-5,9z" fill="#d2d2d2"/></g><path d="M195,598 v-7 l-7,7z" fill="#d2d2d2"/></svg>
<svg style="left:0;top:0" width="2696" height="1576" viewBox="0 0 2696 1576"><rect x="95" y="613.500" width="30" height="25" fill="none" stroke="#d2d2d2" stroke-width="2"/><path d="M95,613.500 l30,25 M125,613.500 l-30,25" stroke="#d2d2d2" stroke-width="1.800"/><path d="M135,646 v-7 l-7,7z" fill="#d2d2d2"/></svg>
<svg style="left:0;top:0" width="2696" height="1576" viewBox="0 0 2696 1576"><rect x="155" y="613.500" width="30" height="25" fill="#6a6a6a" stroke="#d2d2d2" stroke-width="2"/><path d="M195,646 v-7 l-7,7z" fill="#d2d2d2"/></svg>
<svg style="left:0;top:0" width="2696" height="1576" viewBox="0 0 2696 1576"><g fill="none" stroke="#d2d2d2" stroke-width="2.600"><circle cx="121.500" cy="669" r="4.500"/><circle cx="121.500" cy="690" r="4.500"/><path d="M118,671.500 l-24,13 M118,687.500 l-24,-13" stroke-linecap="round"/></g></svg>
<svg style="left:0;top:0" width="2696" height="1576" viewBox="0 0 2696 1576"><path d="M152,664 v27 l13,-13z" fill="#d2d2d2"/><rect x="165" y="668" width="23" height="23" fill="none" stroke="#d2d2d2" stroke-width="2" stroke-dasharray="4 3"/><g fill="#d2d2d2"><rect x="162.500" y="665.500" width="5" height="5"/><rect x="185.500" y="665.500" width="5" height="5"/><rect x="162.500" y="688.500" width="5" height="5"/><rect x="185.500" y="688.500" width="5" height="5"/><rect x="174" y="665.500" width="5" height="5"/><rect x="174" y="688.500" width="5" height="5"/><rect x="185.500" y="677" width="5" height="5"/></g><path d="M195,699 v-7 l-7,7z" fill="#d2d2d2"/></svg>
<svg style="left:0;top:0" width="2696" height="1576" viewBox="0 0 2696 1576"><defs><linearGradient id="gsw" x1="0" y1="0" x2="1" y2="0"><stop offset="0" stop-color="#e0e0e0"/><stop offset="1" stop-color="#4a4a4a"/></linearGradient><linearGradient id="gfe" x1="0" y1="0" x2="0" y2="1"><stop offset="0" stop-color="#666"/><stop offset="1" stop-color="#d8d8d8"/></linearGradient></defs><rect x="95" y="715" width="30" height="25" fill="url(#gsw)" stroke="#d2d2d2" stroke-width="1.800"/><rect x="155" y="715" width="30" height="25" fill="url(#gfe)" stroke="#d2d2d2" stroke-width="1.800"/><rect x="156.0" y="716.0" width="5.6" height="5.6" fill="#8a8a8a" opacity="0.9"/><rect x="161.6" y="716.0" width="5.6" height="5.6" fill="#8a8a8a" opacity="0"/><rect x="167.2" y="716.0" width="5.6" height="5.6" fill="#8a8a8a" opacity="0.9"/><rect x="172.8" y="716.0" width="5.6" height="5.6" fill="#8a8a8a" opacity="0"/><rect x="178.4" y="716.0" width="5.6" height="5.6" fill="#8a8a8a" opacity="0.9"/><rect x="156.0" y="721.6" width="5.6" height="5.6" fill="#8a8a8a" opacity="0.9"/><rect x="161.6" y="721.6" width="5.6" height="5.6" fill="#8a8a8a" opacity="0"/><rect x="167.2" y="721.6" width="5.6" height="5.6" fill="#8a8a8a" opacity="0.9"/><rect x="172.8" y="721.6" width="5.6" height="5.6" fill="#8a8a8a" opacity="0"/><rect x="178.4" y="721.6" width="5.6" height="5.6" fill="#8a8a8a" opacity="0.9"/></svg>
<svg style="left:0;top:0" width="2696" height="1576" viewBox="0 0 2696 1576"><path d="M96,767 h28 v20 l-8,8 h-20z" fill="#d2d2d2"/><path d="M101,773.500 h18 M101,779 h18 M101,784.500 h12" stroke="#535353" stroke-width="2"/><path d="M116,795 v-8 h8" fill="#535353" stroke="#d2d2d2" stroke-width="1.500"/></svg>
<svg style="left:0;top:0" width="2696" height="1576" viewBox="0 0 2696 1576"><g transform="translate(170,781) rotate(45)"><rect x="-4" y="-21" width="8" height="9" rx="2.500" fill="#d2d2d2"/><rect x="-6.500" y="-13" width="13" height="4" fill="#d2d2d2"/><path d="M-3.500,-9 h7 v17 l-3.500,7 -3.500,-7z" fill="none" stroke="#d2d2d2" stroke-width="2.200"/></g><path d="M195,802 v-7 l-7,7z" fill="#d2d2d2"/></svg>
<svg style="left:0;top:0" width="2696" height="1576" viewBox="0 0 2696 1576"><g fill="#d2d2d2" transform="translate(110,829.5) scale(0.88) translate(-110,-823)"><path d="M100,829 c-2,-4 -5,-8 -3,-10 2,-2 5,1 7,4 l-2,-13 c0,-3 4,-3 4.500,0 l1.500,8 v-11 c0,-3 4.500,-3 4.500,0 v11 l1.500,-9 c.5,-3 4.500,-2.500 4,0.500 l-1,10 2.500,-6 c1,-3 5,-1.500 4,1.500 -2,7 -3,12 -5,17 -2,5 -4,7 -6,10 h-10 c-2,-4 -4,-9 -7,-13z"/></g></svg>
<svg style="left:0;top:0" width="2696" height="1576" viewBox="0 0 2696 1576"><circle cx="166" cy="826" r="10" fill="none" stroke="#d2d2d2" stroke-width="2.600"/><path d="M173.500,834 l11,11" stroke="#d2d2d2" stroke-width="4.500" stroke-linecap="round"/></svg>
<div style="left:87px;top:866px;width:71px;height:70px;background:#000;box-shadow:0 0 0 1.500px #e0e0e0 inset;"></div>
<div style="left:125.5px;top:904px;width:67.5px;height:67px;background:#fff;"></div>
<div style="left:143.5px;top:922px;width:31.5px;height:31px;background:#5a5a5a;"></div>
<svg style="left:0;top:0" width="2696" height="1576" viewBox="0 0 2696 1576"><path d="M129,967 l60,-58" stroke="#f01018" stroke-width="4.500"/></svg>
<svg style="left:0;top:0" width="2696" height="1576" viewBox="0 0 2696 1576"><path d="M183,873 h8 v10" fill="none" stroke="#d2d2d2" stroke-width="2.200"/><path d="M177.500,873 l6,-4.500 v9z M191,889.500 l-4.500,-6 h9z" fill="#d2d2d2"/></svg>
<svg style="left:0;top:0" width="2696" height="1576" viewBox="0 0 2696 1576"><rect x="94.500" y="952.500" width="16" height="16" fill="#2a2a2a" stroke="#bbb" stroke-width="1.400"/><rect x="98" y="956" width="9" height="9" fill="#535353"/><rect x="88.500" y="946.500" width="15" height="15" fill="#fff" stroke="#bbb" stroke-width="1.400"/><path d="M89.500,960.500 l13,-13" stroke="#e01018" stroke-width="1.600"/></svg>
<div style="left:98px;top:990px;width:36px;height:31.5px;background:#3a3a3a;border-radius:5px;"></div>
<svg style="left:0;top:0" width="2696" height="1576" viewBox="0 0 2696 1576"><rect x="108.500" y="997.500" width="15" height="15" fill="none" stroke="#d2d2d2" stroke-width="2.200"/></svg>
<span class="t" style="left:153.00px;top:991.14px;font-size:27px;line-height:27px;color:#d2d2d2;font-weight:700;font-family:'Liberation Serif',serif;">T</span>
<div style="left:87px;top:1041px;width:24px;height:24px;background:#000;box-shadow:0 0 0 1.500px #9a9a9a;"></div>
<div style="left:127px;top:1041px;width:24px;height:24px;background:linear-gradient(90deg,#fff,#000);box-shadow:0 0 0 1.500px #9a9a9a;"></div>
<div style="left:162px;top:1036px;width:35.5px;height:35.5px;background:#3a3a3a;border-radius:5px;"></div>
<div style="left:167.5px;top:1041px;width:24px;height:24px;background:#fff;box-shadow:0 0 0 1.500px #9a9a9a;"></div>
<svg style="left:0;top:0" width="2696" height="1576" viewBox="0 0 2696 1576"><path d="M168.500,1064 l22,-22" stroke="#f01018" stroke-width="3.500"/><path d="M195.500,1069.500 v-6 l-6,6z" fill="#d2d2d2"/></svg>
<svg style="left:0;top:0" width="2696" height="1576" viewBox="0 0 2696 1576"><rect x="106" y="1104" width="18" height="13" fill="#d2d2d2"/><path d="M97,1103.500 h6 M97,1110 h4 M97,1116.500 h6" stroke="#d2d2d2" stroke-width="1.800"/><path d="M108,1100 v-4 M113.500,1100 v-5 M119,1100 v-5 M124,1100 v-4" stroke="#d2d2d2" stroke-width="1.800"/><path d="M135,1127 v-7 l-7,7z" fill="#d2d2d2"/></svg>
<div style="left:82px;top:1144.5px;width:55.5px;height:43px;background:#3a3a3a;border-radius:5px;"></div>
<svg style="left:0;top:0" width="2696" height="1576" viewBox="0 0 2696 1576"><rect x="100.500" y="1155.500" width="20" height="20" fill="none" stroke="#d2d2d2" stroke-width="2"/><rect x="105" y="1161" width="7" height="6" fill="none" stroke="#d2d2d2" stroke-width="1.600"/><rect x="109" y="1164.500" width="7" height="6" fill="#3a3a3a" stroke="#d2d2d2" stroke-width="1.600"/></svg>
<svg style="left:0;top:0" width="2696" height="1576" viewBox="0 0 2696 1576"><rect x="160.500" y="1157" width="21" height="19" fill="#7a7a7a" stroke="#d2d2d2" stroke-width="1.800"/><rect x="160.500" y="1155.500" width="21" height="4.500" fill="#d2d2d2"/><path d="M195,1184 v-7 l-7,7z" fill="#d2d2d2"/></svg>
<div style="left:2298px;top:304px;width:330px;height:1203px;background:#535353;"></div>
<div style="left:2298px;top:304px;width:330px;height:23px;background:#424242;"></div>
<svg style="left:0;top:0" width="2696" height="1576" viewBox="0 0 2696 1576"><path d="M2604,311 l-4.500,4.500 4.500,4.500 M2612.500,311 l-4.500,4.500 4.500,4.500" fill="none" stroke="#d0d0d0" stroke-width="1.800"/></svg>
<svg style="left:0;top:0" width="2696" height="1576" viewBox="0 0 2696 1576"><rect x="2442.0" y="334.5" width="2" height="7" fill="#3a3a3a"/><rect x="2446.0" y="334.5" width="2" height="7" fill="#3a3a3a"/><rect x="2450.0" y="334.5" width="2" height="7" fill="#3a3a3a"/><rect x="2454.0" y="334.5" width="2" height="7" fill="#3a3a3a"/><rect x="2458.0" y="334.5" width="2" height="7" fill="#3a3a3a"/><rect x="2462.0" y="334.5" width="2" height="7" fill="#3a3a3a"/><rect x="2466.0" y="334.5" width="2" height="7" fill="#3a3a3a"/><rect x="2470.0" y="334.5" width="2" height="7" fill="#3a3a3a"/><rect x="2474.0" y="334.5" width="2" height="7" fill="#3a3a3a"/><rect x="2478.0" y="334.5" width="2" height="7" fill="#3a3a3a"/></svg>
<span class="t" style="left:2372.00px;top:364.63px;font-size:23px;line-height:23px;color:#f2f2f2;font-weight:700;transform:scaleX(0.9592);transform-origin:0 0;">Pages</span>
<span class="t" style="left:2372.00px;top:420.63px;font-size:23px;line-height:23px;color:#f2f2f2;font-weight:700;transform:scaleX(0.9707);transform-origin:0 0;">Layers</span>
<span class="t" style="left:2372.00px;top:476.63px;font-size:23px;line-height:23px;color:#f2f2f2;font-weight:700;letter-spacing:-0.270px;">Links</span>
<div style="left:2298px;top:519.5px;width:330px;height:2.5px;background:#3c3c3c;"></div>
<svg style="left:0;top:0" width="2696" height="1576" viewBox="0 0 2696 1576"><rect x="2442.0" y="528.5" width="2" height="7" fill="#3a3a3a"/><rect x="2446.0" y="528.5" width="2" height="7" fill="#3a3a3a"/><rect x="2450.0" y="528.5" width="2" height="7" fill="#3a3a3a"/><rect x="2454.0" y="528.5" width="2" height="7" fill="#3a3a3a"/><rect x="2458.0" y="528.5" width="2" height="7" fill="#3a3a3a"/><rect x="2462.0" y="528.5" width="2" height="7" fill="#3a3a3a"/><rect x="2466.0" y="528.5" width="2" height="7" fill="#3a3a3a"/><rect x="2470.0" y="528.5" width="2" height="7" fill="#3a3a3a"/><rect x="2474.0" y="528.5" width="2" height="7" fill="#3a3a3a"/><rect x="2478.0" y="528.5" width="2" height="7" fill="#3a3a3a"/></svg>
<span class="t" style="left:2372.00px;top:558.63px;font-size:23px;line-height:23px;color:#f2f2f2;font-weight:700;letter-spacing:-0.019px;">Stroke</span>
<span class="t" style="left:2372.00px;top:614.63px;font-size:23px;line-height:23px;color:#f2f2f2;font-weight:700;letter-spacing:0.078px;">Colour</span>
<div style="left:2298px;top:657.5px;width:330px;height:2.5px;background:#3c3c3c;"></div>
<svg style="left:0;top:0" width="2696" height="1576" viewBox="0 0 2696 1576"><rect x="2442.0" y="666.5" width="2" height="7" fill="#3a3a3a"/><rect x="2446.0" y="666.5" width="2" height="7" fill="#3a3a3a"/><rect x="2450.0" y="666.5" width="2" height="7" fill="#3a3a3a"/><rect x="2454.0" y="666.5" width="2" height="7" fill="#3a3a3a"/><rect x="2458.0" y="666.5" width="2" height="7" fill="#3a3a3a"/><rect x="2462.0" y="666.5" width="2" height="7" fill="#3a3a3a"/><rect x="2466.0" y="666.5" width="2" height="7" fill="#3a3a3a"/><rect x="2470.0" y="666.5" width="2" height="7" fill="#3a3a3a"/><rect x="2474.0" y="666.5" width="2" height="7" fill="#3a3a3a"/><rect x="2478.0" y="666.5" width="2" height="7" fill="#3a3a3a"/></svg>
<span class="t" style="left:2372.00px;top:696.63px;font-size:23px;line-height:23px;color:#f2f2f2;font-weight:700;letter-spacing:-0.373px;">Swatches</span>
<div style="left:2298px;top:739.5px;width:330px;height:2.5px;background:#3c3c3c;"></div>
<svg style="left:0;top:0" width="2696" height="1576" viewBox="0 0 2696 1576"><rect x="2442.0" y="748.5" width="2" height="7" fill="#3a3a3a"/><rect x="2446.0" y="748.5" width="2" height="7" fill="#3a3a3a"/><rect x="2450.0" y="748.5" width="2" height="7" fill="#3a3a3a"/><rect x="2454.0" y="748.5" width="2" height="7" fill="#3a3a3a"/><rect x="2458.0" y="748.5" width="2" height="7" fill="#3a3a3a"/><rect x="2462.0" y="748.5" width="2" height="7" fill="#3a3a3a"/><rect x="2466.0" y="748.5" width="2" height="7" fill="#3a3a3a"/><rect x="2470.0" y="748.5" width="2" height="7" fill="#3a3a3a"/><rect x="2474.0" y="748.5" width="2" height="7" fill="#3a3a3a"/><rect x="2478.0" y="748.5" width="2" height="7" fill="#3a3a3a"/></svg>
<span class="t" style="left:2372.00px;top:778.63px;font-size:23px;line-height:23px;color:#f2f2f2;font-weight:700;letter-spacing:0.092px;">Paragraph</span>
<div style="left:2298px;top:821.5px;width:330px;height:2.5px;background:#3c3c3c;"></div>
<svg style="left:0;top:0" width="2696" height="1576" viewBox="0 0 2696 1576"><rect x="2442.0" y="830.5" width="2" height="7" fill="#3a3a3a"/><rect x="2446.0" y="830.5" width="2" height="7" fill="#3a3a3a"/><rect x="2450.0" y="830.5" width="2" height="7" fill="#3a3a3a"/><rect x="2454.0" y="830.5" width="2" height="7" fill="#3a3a3a"/><rect x="2458.0" y="830.5" width="2" height="7" fill="#3a3a3a"/><rect x="2462.0" y="830.5" width="2" height="7" fill="#3a3a3a"/><rect x="2466.0" y="830.5" width="2" height="7" fill="#3a3a3a"/><rect x="2470.0" y="830.5" width="2" height="7" fill="#3a3a3a"/><rect x="2474.0" y="830.5" width="2" height="7" fill="#3a3a3a"/><rect x="2478.0" y="830.5" width="2" height="7" fill="#3a3a3a"/></svg>
<span class="t" style="left:2372.00px;top:860.63px;font-size:23px;line-height:23px;color:#f2f2f2;font-weight:700;letter-spacing:0.617px;">Text Wrap</span>
<div style="left:2298px;top:903.5px;width:330px;height:2.5px;background:#3c3c3c;"></div>
<svg style="left:0;top:0" width="2696" height="1576" viewBox="0 0 2696 1576"><rect x="2442.0" y="912.5" width="2" height="7" fill="#3a3a3a"/><rect x="2446.0" y="912.5" width="2" height="7" fill="#3a3a3a"/><rect x="2450.0" y="912.5" width="2" height="7" fill="#3a3a3a"/><rect x="2454.0" y="912.5" width="2" height="7" fill="#3a3a3a"/><rect x="2458.0" y="912.5" width="2" height="7" fill="#3a3a3a"/><rect x="2462.0" y="912.5" width="2" height="7" fill="#3a3a3a"/><rect x="2466.0" y="912.5" width="2" height="7" fill="#3a3a3a"/><rect x="2470.0" y="912.5" width="2" height="7" fill="#3a3a3a"/><rect x="2474.0" y="912.5" width="2" height="7" fill="#3a3a3a"/><rect x="2478.0" y="912.5" width="2" height="7" fill="#3a3a3a"/></svg>
<span class="t" style="left:2372.00px;top:942.63px;font-size:23px;line-height:23px;color:#f2f2f2;font-weight:700;letter-spacing:0.201px;">Character</span>
<div style="left:2298px;top:985.5px;width:330px;height:2.5px;background:#3c3c3c;"></div>
<svg style="left:0;top:0" width="2696" height="1576" viewBox="0 0 2696 1576"><rect x="2442.0" y="994.5" width="2" height="7" fill="#3a3a3a"/><rect x="2446.0" y="994.5" width="2" height="7" fill="#3a3a3a"/><rect x="2450.0" y="994.5" width="2" height="7" fill="#3a3a3a"/><rect x="2454.0" y="994.5" width="2" height="7" fill="#3a3a3a"/><rect x="2458.0" y="994.5" width="2" height="7" fill="#3a3a3a"/><rect x="2462.0" y="994.5" width="2" height="7" fill="#3a3a3a"/><rect x="2466.0" y="994.5" width="2" height="7" fill="#3a3a3a"/><rect x="2470.0" y="994.5" width="2" height="7" fill="#3a3a3a"/><rect x="2474.0" y="994.5" width="2" height="7" fill="#3a3a3a"/><rect x="2478.0" y="994.5" width="2" height="7" fill="#3a3a3a"/></svg>
<span class="t" style="left:2372.00px;top:1024.63px;font-size:23px;line-height:23px;color:#f2f2f2;font-weight:700;letter-spacing:0.005px;">Paragraph Styles</span>
<div style="left:2298px;top:1067.5px;width:330px;height:2.5px;background:#3c3c3c;"></div>
<svg style="left:0;top:0" width="2696" height="1576" viewBox="0 0 2696 1576"><rect x="2442.0" y="1076.5" width="2" height="7" fill="#3a3a3a"/><rect x="2446.0" y="1076.5" width="2" height="7" fill="#3a3a3a"/><rect x="2450.0" y="1076.5" width="2" height="7" fill="#3a3a3a"/><rect x="2454.0" y="1076.5" width="2" height="7" fill="#3a3a3a"/><rect x="2458.0" y="1076.5" width="2" height="7" fill="#3a3a3a"/><rect x="2462.0" y="1076.5" width="2" height="7" fill="#3a3a3a"/><rect x="2466.0" y="1076.5" width="2" height="7" fill="#3a3a3a"/><rect x="2470.0" y="1076.5" width="2" height="7" fill="#3a3a3a"/><rect x="2474.0" y="1076.5" width="2" height="7" fill="#3a3a3a"/><rect x="2478.0" y="1076.5" width="2" height="7" fill="#3a3a3a"/></svg>
<span class="t" style="left:2372.00px;top:1106.63px;font-size:23px;line-height:23px;color:#f2f2f2;font-weight:700;letter-spacing:0.064px;">Character Styles</span>
<div style="left:2298px;top:1149.5px;width:330px;height:2.5px;background:#3c3c3c;"></div>
<svg style="left:0;top:0" width="2696" height="1576" viewBox="0 0 2696 1576"><rect x="2442.0" y="1158.5" width="2" height="7" fill="#3a3a3a"/><rect x="2446.0" y="1158.5" width="2" height="7" fill="#3a3a3a"/><rect x="2450.0" y="1158.5" width="2" height="7" fill="#3a3a3a"/><rect x="2454.0" y="1158.5" width="2" height="7" fill="#3a3a3a"/><rect x="2458.0" y="1158.5" width="2" height="7" fill="#3a3a3a"/><rect x="2462.0" y="1158.5" width="2" height="7" fill="#3a3a3a"/><rect x="2466.0" y="1158.5" width="2" height="7" fill="#3a3a3a"/><rect x="2470.0" y="1158.5" width="2" height="7" fill="#3a3a3a"/><rect x="2474.0" y="1158.5" width="2" height="7" fill="#3a3a3a"/><rect x="2478.0" y="1158.5" width="2" height="7" fill="#3a3a3a"/></svg>
<span class="t" style="left:2372.00px;top:1188.63px;font-size:23px;line-height:23px;color:#f2f2f2;font-weight:700;letter-spacing:0.781px;">Table</span>
<div style="left:2298px;top:1231.5px;width:330px;height:2.5px;background:#3c3c3c;"></div>
<svg style="left:0;top:0" width="2696" height="1576" viewBox="0 0 2696 1576"><rect x="2442.0" y="1240.5" width="2" height="7" fill="#3a3a3a"/><rect x="2446.0" y="1240.5" width="2" height="7" fill="#3a3a3a"/><rect x="2450.0" y="1240.5" width="2" height="7" fill="#3a3a3a"/><rect x="2454.0" y="1240.5" width="2" height="7" fill="#3a3a3a"/><rect x="2458.0" y="1240.5" width="2" height="7" fill="#3a3a3a"/><rect x="2462.0" y="1240.5" width="2" height="7" fill="#3a3a3a"/><rect x="2466.0" y="1240.5" width="2" height="7" fill="#3a3a3a"/><rect x="2470.0" y="1240.5" width="2" height="7" fill="#3a3a3a"/><rect x="2474.0" y="1240.5" width="2" height="7" fill="#3a3a3a"/><rect x="2478.0" y="1240.5" width="2" height="7" fill="#3a3a3a"/></svg>
<span class="t" style="left:2372.00px;top:1270.63px;font-size:23px;line-height:23px;color:#f2f2f2;font-weight:700;letter-spacing:0.252px;">Pathfinder</span>
<div style="left:2298px;top:1313.5px;width:330px;height:2.5px;background:#3c3c3c;"></div>
<svg style="left:0;top:0" width="2696" height="1576" viewBox="0 0 2696 1576"><rect x="2442.0" y="1322.5" width="2" height="7" fill="#3a3a3a"/><rect x="2446.0" y="1322.5" width="2" height="7" fill="#3a3a3a"/><rect x="2450.0" y="1322.5" width="2" height="7" fill="#3a3a3a"/><rect x="2454.0" y="1322.5" width="2" height="7" fill="#3a3a3a"/><rect x="2458.0" y="1322.5" width="2" height="7" fill="#3a3a3a"/><rect x="2462.0" y="1322.5" width="2" height="7" fill="#3a3a3a"/><rect x="2466.0" y="1322.5" width="2" height="7" fill="#3a3a3a"/><rect x="2470.0" y="1322.5" width="2" height="7" fill="#3a3a3a"/><rect x="2474.0" y="1322.5" width="2" height="7" fill="#3a3a3a"/><rect x="2478.0" y="1322.5" width="2" height="7" fill="#3a3a3a"/></svg>
<span class="t" style="left:2372.00px;top:1352.63px;font-size:23px;line-height:23px;color:#f2f2f2;font-weight:700;letter-spacing:0.250px;">Align</span>
<div style="left:2298px;top:1395.5px;width:330px;height:2.5px;background:#3c3c3c;"></div>
<svg style="left:0;top:0" width="2696" height="1576" viewBox="0 0 2696 1576"><g fill="#d2d2d2"><path d="M2319.600,371 L2327.800,362.700 H2334.600 V388.300 H2319.600Z M2339,362.700 H2345.800 L2354,371 V388.300 H2339Z"/><rect x="2335.900" y="356.200" width="1.800" height="38.600"/></g><path d="M2319.600,371.600 H2328.400 V362.700 M2354,371.600 H2345.200 V362.700" fill="none" stroke="#535353" stroke-width="1.600"/></svg>
<svg style="left:0;top:0" width="2696" height="1576" viewBox="0 0 2696 1576"><g fill="#d2d2d2"><path d="M2336.700,413.800 l16.400,10.500 -16.400,10.500 -16.400,-10.500z"/><path d="M2320.300,436.300 L2326,432.600 L2336.700,439.500 L2347.400,432.600 L2353,436.300 L2336.700,447.900Z"/></g></svg>
<svg style="left:0;top:0" width="2696" height="1576" viewBox="0 0 2696 1576"><g fill="none" stroke="#d2d2d2" stroke-width="4.200"><rect x="2319.800" y="480.100" width="20.500" height="12.200" rx="6.100"/><rect x="2333.200" y="480.100" width="20.500" height="12.200" rx="6.100"/></g><path d="M2331.500,483 l4,5 M2338,484.500 l4,5" stroke="#535353" stroke-width="1.500"/></svg>
<svg style="left:0;top:0" width="2696" height="1576" viewBox="0 0 2696 1576"><g fill="#d2d2d2"><rect x="2320.500" y="556.500" width="34" height="1.600"/><rect x="2320.500" y="563.500" width="34" height="3"/><rect x="2320.500" y="573" width="34" height="6.500"/></g></svg>
<svg style="left:0;top:0" width="2696" height="1576" viewBox="0 0 2696 1576"><ellipse cx="2336.700" cy="626" rx="18.600" ry="12" fill="#d2d2d2"/><ellipse cx="2339.500" cy="619" rx="11.500" ry="9" fill="#d2d2d2"/><circle cx="2329.500" cy="614.800" r="3.600" fill="#535353"/><g fill="#535353"><circle cx="2326.500" cy="628.500" r="3.300"/><circle cx="2335.200" cy="632.300" r="2.900"/><circle cx="2343.200" cy="631" r="2.600"/><circle cx="2348.700" cy="625.300" r="2.400"/><circle cx="2346.500" cy="619" r="2.200"/></g></svg>
<svg style="left:0;top:0" width="2696" height="1576" viewBox="0 0 2696 1576"><rect x="2320.500" y="697" width="30" height="20" fill="#d2d2d2" stroke="#d2d2d2" stroke-width="1.800"/><g fill="#8e8e8e"><rect x="2322.300" y="698.800" width="8" height="7.400"/><rect x="2341.200" y="698.800" width="7.800" height="7.400"/><rect x="2322.300" y="708" width="8" height="7.400"/><rect x="2332" y="708" width="7.500" height="7.400"/></g><rect x="2341.200" y="708" width="7.800" height="7.400" fill="#b4b4b4"/></svg>
<svg style="left:0;top:0" width="2696" height="1576" viewBox="0 0 2696 1576"><path d="M2346.500,776 v28 M2340,776 v28" stroke="#d2d2d2" stroke-width="2" fill="none"/><path d="M2341,775 h-8 a8.500,8.500 0 0 0 0,17 h8z" fill="#d2d2d2"/><rect x="2333" y="775" width="15" height="2" fill="#d2d2d2"/></svg>
<svg style="left:0;top:0" width="2696" height="1576" viewBox="0 0 2696 1576"><rect x="2320.500" y="858.0" width="34" height="1.600" fill="#d2d2d2"/><rect x="2320.500" y="864.2" width="34" height="1.600" fill="#d2d2d2"/><rect x="2320.500" y="870.4" width="34" height="1.600" fill="#d2d2d2"/><rect x="2320.500" y="876.6" width="34" height="1.600" fill="#d2d2d2"/><rect x="2320.500" y="882.8" width="34" height="1.600" fill="#d2d2d2"/><circle cx="2337.500" cy="870.500" r="9.500" fill="#535353"/><circle cx="2337.500" cy="870.500" r="7.500" fill="#d2d2d2"/></svg>
<svg style="left:0;top:0" width="2696" height="1576" viewBox="0 0 2696 1576"><path d="M2322,964 l10.500,-26 h3.500 l10.500,26 h-4 l-2.800,-7.500 h-11 l-2.800,7.500z M2330,953.300 h8.400 l-4.200,-11.300z" fill="#d2d2d2" fill-rule="evenodd"/><rect x="2350" y="934" width="1.800" height="35" fill="#d2d2d2"/></svg>
<svg style="left:0;top:0" width="2696" height="1576" viewBox="0 0 2696 1576"><g fill="none" stroke="#d2d2d2" stroke-width="1.800"><rect x="2321" y="1036" width="10" height="10"/><rect x="2326.500" y="1041.500" width="10" height="10" fill="#535353"/></g><path d="M2350,1019 v25 M2344.500,1019 v25" stroke="#d2d2d2" stroke-width="1.800" fill="none"/><path d="M2345,1018 h-5.500 a7,7 0 0 0 0,14 h5.500z" fill="#d2d2d2"/><rect x="2339" y="1018" width="12" height="1.800" fill="#d2d2d2"/></svg>
<svg style="left:0;top:0" width="2696" height="1576" viewBox="0 0 2696 1576"><g fill="none" stroke="#d2d2d2" stroke-width="1.800"><rect x="2321" y="1118" width="10" height="10"/><rect x="2326.500" y="1123.500" width="10" height="10" fill="#535353"/></g><path d="M2334,1123 l9,-22 h3 l9,22 h-3.500 l-2.400,-6.300 h-9.200 l-2.400,6.300z M2340.800,1113.800 h7.200 l-3.600,-9.600z" fill="#d2d2d2" fill-rule="evenodd"/></svg>
<svg style="left:0;top:0" width="2696" height="1576" viewBox="0 0 2696 1576"><g fill="none" stroke="#d2d2d2" stroke-width="1.800"><rect x="2322.500" y="1184.600" width="28" height="24"/><path d="M2322.500,1191.600 h28 M2329.500,1184.600 v24"/></g><path d="M2329.500,1197.600 h21 M2329.500,1203.100 h21" stroke="#d2d2d2" stroke-width="1.200"/></svg>
<svg style="left:0;top:0" width="2696" height="1576" viewBox="0 0 2696 1576"><rect x="2322" y="1266" width="17.500" height="17.500" fill="#d2d2d2"/><rect x="2332.500" y="1277" width="19.500" height="19.500" fill="#d2d2d2"/><rect x="2331.300" y="1275.800" width="9.400" height="9" fill="none" stroke="#535353" stroke-width="1.600"/></svg>
<svg style="left:0;top:0" width="2696" height="1576" viewBox="0 0 2696 1576"><rect x="2320.500" y="1345" width="1.800" height="36" fill="#d2d2d2"/><rect x="2324.500" y="1351" width="16" height="10" fill="#d2d2d2"/><rect x="2324.500" y="1366" width="28" height="10" fill="#d2d2d2"/></svg>
<div style="left:1750px;top:617.5px;width:484px;height:316px;background:#535353;border-radius:7px 7px 2px 2px;box-shadow:0 0 0 1.5px #3a3a3a,0 3px 12px rgba(0,0,0,.35);"></div>
<div style="left:1750px;top:617.5px;width:484px;height:81px;background:#424242;border-radius:7px 7px 0 0;"></div>
<div style="left:1750px;top:644.5px;width:484px;height:1.5px;background:#383838;"></div>
<div style="left:1750px;top:646px;width:168px;height:53px;background:#535353;"></div>
<div style="left:1918px;top:697px;width:316px;height:1.8px;background:#3a3a3a;"></div>
<div style="left:1917px;top:646px;width:1.5px;height:52px;background:#3a3a3a;"></div>
<svg style="left:0;top:0" width="2696" height="1576" viewBox="0 0 2696 1576"><path d="M1762.500,628 l11.500,11.500 M1774,628 l-11.500,11.500" stroke="#d8d8d8" stroke-width="2.200"/><path d="M2210.500,629.500 l-4.500,4.500 4.500,4.500 M2218.500,629.500 l-4.500,4.500 4.500,4.500" fill="none" stroke="#d0d0d0" stroke-width="1.800"/></svg>
<span class="t" style="left:1776.30px;top:662.53px;font-size:23px;line-height:23px;color:#f2f2f2;font-weight:700;letter-spacing:0.689px;">Transform</span>
<svg style="left:0;top:0" width="2696" height="1576" viewBox="0 0 2696 1576"><path d="M2200,667 h20 M2200,671.500 h20 M2200,676 h20 M2200,680.500 h20" stroke="#d0d0d0" stroke-width="1.800"/></svg>
<div style="left:1758px;top:722.5px;width:72px;height:71px;background:#5d5d5d;"></div>
<svg style="left:0;top:0" width="2696" height="1576" viewBox="0 0 2696 1576"><line x1="1775.325" y1="739.425" x2="1813.075" y2="739.425" stroke="#e4e4e4" stroke-width="1.8"/><line x1="1775.325" y1="739.425" x2="1775.325" y2="777.175" stroke="#e4e4e4" stroke-width="1.8"/><line x1="1775.325" y1="777.175" x2="1813.075" y2="777.175" stroke="#e4e4e4" stroke-width="1.8"/><line x1="1813.075" y1="739.425" x2="1813.075" y2="777.175" stroke="#e4e4e4" stroke-width="1.8"/><line x1="1775.325" y1="758.3" x2="1813.075" y2="758.3" stroke="#e4e4e4" stroke-width="1.8"/><line x1="1794.2" y1="739.425" x2="1794.2" y2="777.175" stroke="#e4e4e4" stroke-width="1.8"/><rect x="1770.20" y="734.30" width="10.25" height="10.25" fill="#5d5d5d" stroke="#e4e4e4" stroke-width="2"/><rect x="1789.08" y="734.30" width="10.25" height="10.25" fill="#5d5d5d" stroke="#e4e4e4" stroke-width="2"/><rect x="1807.95" y="734.30" width="10.25" height="10.25" fill="#5d5d5d" stroke="#e4e4e4" stroke-width="2"/><rect x="1770.20" y="753.17" width="10.25" height="10.25" fill="#5d5d5d" stroke="#e4e4e4" stroke-width="2"/><rect x="1789.08" y="753.17" width="10.25" height="10.25" fill="#fff" stroke="#e4e4e4" stroke-width="2"/><rect x="1807.95" y="753.17" width="10.25" height="10.25" fill="#5d5d5d" stroke="#e4e4e4" stroke-width="2"/><rect x="1770.20" y="772.05" width="10.25" height="10.25" fill="#5d5d5d" stroke="#e4e4e4" stroke-width="2"/><rect x="1789.08" y="772.05" width="10.25" height="10.25" fill="#5d5d5d" stroke="#e4e4e4" stroke-width="2"/><rect x="1807.95" y="772.05" width="10.25" height="10.25" fill="#5d5d5d" stroke="#e4e4e4" stroke-width="2"/></svg>
<span class="t" style="left:1832.60px;top:722.92px;font-size:21px;line-height:21px;color:#f0f0f0;font-weight:700;transform:scaleX(0.8571);transform-origin:0 0;">X:</span>
<span class="t" style="left:1832.60px;top:774.22px;font-size:21px;line-height:21px;color:#f0f0f0;font-weight:700;transform:scaleX(0.9253);transform-origin:0 0;">Y:</span>
<span class="t" style="left:2042.40px;top:722.92px;font-size:21px;line-height:21px;color:#f0f0f0;font-weight:700;transform:scaleX(0.8322);transform-origin:0 0;">W:</span>
<span class="t" style="left:2041.70px;top:774.22px;font-size:21px;line-height:21px;color:#f0f0f0;font-weight:700;transform:scaleX(0.8344);transform-origin:0 0;">H:</span>
<div style="left:1862.3px;top:713px;width:153.5px;height:40.2px;background:#5e5e5e;border-radius:5px;"></div>
<div style="left:2067.8px;top:713px;width:154px;height:40.2px;background:#5e5e5e;border-radius:5px;"></div>
<div style="left:1862.3px;top:764px;width:153.5px;height:40.8px;background:#5e5e5e;border-radius:5px;"></div>
<div style="left:2067.8px;top:764px;width:154px;height:40.8px;background:#5e5e5e;border-radius:5px;"></div>
<div style="left:1862.3px;top:828.1px;width:153.5px;height:41px;background:#5e5e5e;border-radius:5px;"></div>
<div style="left:2067.8px;top:828.1px;width:154px;height:41px;background:#5e5e5e;border-radius:5px;"></div>
<div style="left:1862.3px;top:880.3px;width:153.5px;height:41px;background:#5e5e5e;border-radius:5px;"></div>
<div style="left:2067.8px;top:880.3px;width:154px;height:41px;background:#5e5e5e;border-radius:5px;"></div>
<span class="t" style="left:1872.60px;top:722.42px;font-size:21px;line-height:21px;color:#8d8d8d;letter-spacing:0.580px;">–36.75 mm</span>
<span class="t" style="left:1872.60px;top:773.72px;font-size:21px;line-height:21px;color:#8d8d8d;letter-spacing:0.716px;">40.5 mm</span>
<div style="left:1761px;top:817px;width:460px;height:1.2px;background:#5c5c5c;"></div>
<div style="left:1764px;top:852px;width:44px;height:44px;background:#2b2b2b;border-radius:5px;"></div>
<svg style="left:0;top:0" width="2696" height="1576" viewBox="0 0 2696 1576"><g transform="translate(1786,873.9)"><g fill="none" stroke="#d2d2d2" stroke-width="3.2"><rect x="-4.550" y="-12.600" width="9.100" height="15.500" rx="4.550"/><rect x="-4.550" y="-3.600" width="9.100" height="16.200" rx="4.550"/></g><path d="M-7.200,-2.700 l5.200,-3" stroke="#2b2b2b" stroke-width="1.500"/><path d="M2,5.900 l5.200,-3" stroke="#2b2b2b" stroke-width="1.500"/></g></svg>
<svg style="left:0;top:0" width="2696" height="1576" viewBox="0 0 2696 1576"><g transform="translate(1828.6,835.2)"><path d="M1,27 V1 H27" fill="none" stroke="#cfcfcf" stroke-width="2"/><path d="M1,27.200 H28 M27.200,1 V28" fill="none" stroke="#cfcfcf" stroke-width="2" stroke-dasharray="2 2"/><path d="M4,12.500 h11 v-4 l8,6 -8,6 v-4 h-11z" fill="#cfcfcf"/></g><g transform="translate(1828.6,887)"><path d="M1,27 V1 H27" fill="none" stroke="#cfcfcf" stroke-width="2"/><path d="M1,27.200 H28 M27.200,1 V28" fill="none" stroke="#cfcfcf" stroke-width="2" stroke-dasharray="2 2"/><path d="M12,4 v11 h-4 l6,8 6,-8 h-4 v-11z" fill="#cfcfcf"/></g></svg>
<svg style="left:0;top:0" width="2696" height="1576" viewBox="0 0 2696 1576"><path d="M2035.500,855 H2058 M2036.500,854 L2053,839 M2046.500,845 a11,11 0 0 1 6.500,9.500" fill="none" stroke="#cfcfcf" stroke-width="2.400"/></svg>
<svg style="left:0;top:0" width="2696" height="1576" viewBox="0 0 2696 1576"><path d="M2035.300,910 L2043,892.200 H2058 L2050,910z" fill="#cfcfcf"/></svg>
<svg style="left:0;top:0" width="2696" height="1576" viewBox="0 0 2696 1576"><polyline points="1989.6,845.5 1996.6,852.5 2003.6,845.5" fill="none" stroke="#c4c4c4" stroke-width="2.2" stroke-linecap="square" stroke-linejoin="miter"/><polyline points="1989.6,897.5 1996.6,904.5 2003.6,897.5" fill="none" stroke="#c4c4c4" stroke-width="2.2" stroke-linecap="square" stroke-linejoin="miter"/><polyline points="2195.8,845.5 2202.8,852.5 2209.8,845.5" fill="none" stroke="#c4c4c4" stroke-width="2.2" stroke-linecap="square" stroke-linejoin="miter"/><polyline points="2195.8,897.5 2202.8,904.5 2209.8,897.5" fill="none" stroke="#c4c4c4" stroke-width="2.2" stroke-linecap="square" stroke-linejoin="miter"/></svg>
<div style="left:2434.4px;top:1321.6px;width:135.8px;height:135.8px;background:#fff;border-radius:50%;box-shadow:0 0 6px rgba(0,0,0,.25), inset 0 0 5px rgba(0,0,0,.08);"></div>
<svg style="left:0;top:0" width="2696" height="1576" viewBox="0 0 2696 1576"><path d="M2484.900,1367.300 L2502.300,1390.500 L2520.800,1367.300 L2535,1388.900 L2518.900,1411.700 L2486.500,1411.700 L2470,1388.900Z" fill="#d40000"/></svg>
<svg style="left:0;top:0" width="2696" height="1576" viewBox="0 0 2696 1576"><path d="M757.500,554.500 L757.500,589 L768.300,579.200 L782,579.200 Z" fill="#000" stroke="#d6d6d6" stroke-width="2.600" stroke-linejoin="round"/></svg>
</div></div>
</body></html>
